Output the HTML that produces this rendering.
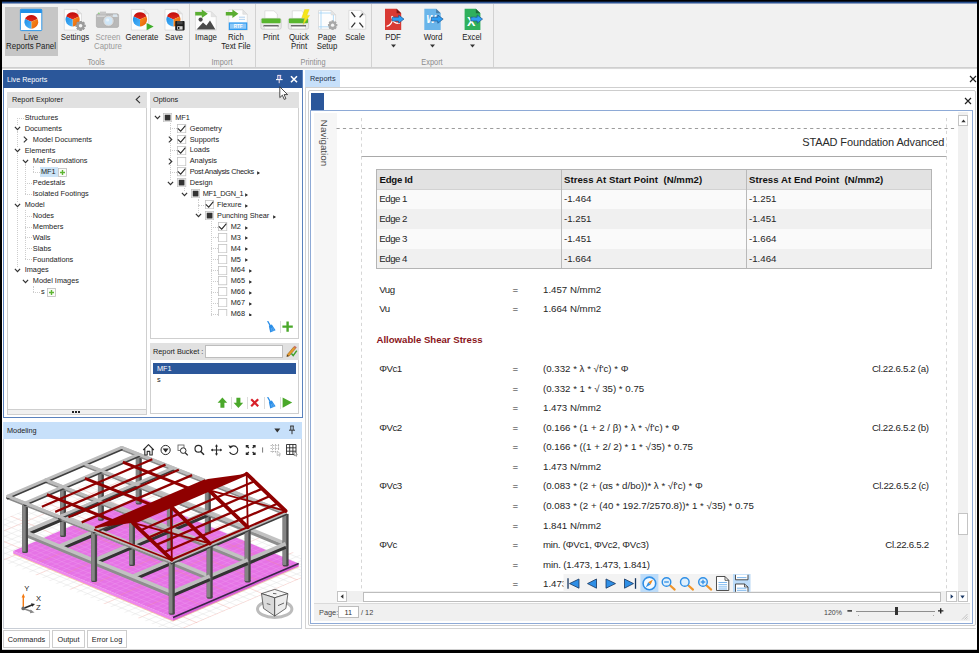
<!DOCTYPE html>
<html><head><meta charset="utf-8"><title>Live Reports</title>
<style>
html,body{margin:0;padding:0}
body{width:979px;height:653px;overflow:hidden;background:#000;position:relative;font-family:"Liberation Sans",sans-serif;}
#app div,#app span.t,#app svg{position:absolute;box-sizing:border-box}
#app{position:absolute;left:0;top:0;width:979px;height:653px;overflow:hidden}
span.t{white-space:pre;display:block}
</style></head><body><div id="app">
<div style="left:2px;top:1px;width:975px;height:649px;background:#ffffff;"></div>
<div style="left:2px;top:1px;width:975px;height:3px;background:#2a5292;"></div>
<div style="left:0px;top:0px;width:979px;height:1px;background:#000;"></div>
<div style="left:2px;top:1px;width:975px;height:1px;background:#0c1830;"></div>
<div style="left:2px;top:3px;width:975px;height:64px;background:#f1f1f1;"></div>
<div style="left:2px;top:3px;width:975px;height:1px;background:#8a9dc0;"></div>
<div style="left:2px;top:67px;width:975px;height:1px;background:#cfcfcf;"></div>
<div style="left:2px;top:68px;width:975px;height:1px;background:#dadada;"></div>
<div style="left:2px;top:69px;width:975px;height:1px;background:#fdfdfd;"></div>
<div style="left:5px;top:7px;width:53px;height:49px;background:#c6c6c6;"></div>
<div style="left:189px;top:4px;width:1px;height:63px;background:#d2d2d2;"></div>
<div style="left:255px;top:4px;width:1px;height:63px;background:#d2d2d2;"></div>
<div style="left:371px;top:4px;width:1px;height:63px;background:#d2d2d2;"></div>
<div style="left:493px;top:4px;width:1px;height:63px;background:#d2d2d2;"></div>
<span class="t" style="top:31px;line-height:12px;font-size:8.5px;color:#202020;left:-118.7px;width:300px;text-align:center;transform:scaleX(0.925);">Live</span>
<span class="t" style="top:40px;line-height:12px;font-size:8.5px;color:#202020;left:-118.7px;width:300px;text-align:center;transform:scaleX(0.925);">Reports Panel</span>
<span class="t" style="top:31px;line-height:12px;font-size:8.5px;color:#202020;left:-75.5px;width:300px;text-align:center;transform:scaleX(0.925);">Settings</span>
<span class="t" style="top:31px;line-height:12px;font-size:8.5px;color:#9a9a9a;left:-42.5px;width:300px;text-align:center;transform:scaleX(0.925);">Screen</span>
<span class="t" style="top:40px;line-height:12px;font-size:8.5px;color:#9a9a9a;left:-42.5px;width:300px;text-align:center;transform:scaleX(0.925);">Capture</span>
<span class="t" style="top:31px;line-height:12px;font-size:8.5px;color:#202020;left:-8px;width:300px;text-align:center;transform:scaleX(0.925);">Generate</span>
<span class="t" style="top:31px;line-height:12px;font-size:8.5px;color:#202020;left:23.5px;width:300px;text-align:center;transform:scaleX(0.925);">Save</span>
<span class="t" style="top:31px;line-height:12px;font-size:8.5px;color:#202020;left:55.5px;width:300px;text-align:center;transform:scaleX(0.925);">Image</span>
<span class="t" style="top:31px;line-height:12px;font-size:8.5px;color:#202020;left:85.5px;width:300px;text-align:center;transform:scaleX(0.925);">Rich</span>
<span class="t" style="top:40px;line-height:12px;font-size:8.5px;color:#202020;left:85.5px;width:300px;text-align:center;transform:scaleX(0.925);">Text File</span>
<span class="t" style="top:31px;line-height:12px;font-size:8.5px;color:#202020;left:121px;width:300px;text-align:center;transform:scaleX(0.925);">Print</span>
<span class="t" style="top:31px;line-height:12px;font-size:8.5px;color:#202020;left:148.5px;width:300px;text-align:center;transform:scaleX(0.925);">Quick</span>
<span class="t" style="top:40px;line-height:12px;font-size:8.5px;color:#202020;left:148.5px;width:300px;text-align:center;transform:scaleX(0.925);">Print</span>
<span class="t" style="top:31px;line-height:12px;font-size:8.5px;color:#202020;left:177px;width:300px;text-align:center;transform:scaleX(0.925);">Page</span>
<span class="t" style="top:40px;line-height:12px;font-size:8.5px;color:#202020;left:177px;width:300px;text-align:center;transform:scaleX(0.925);">Setup</span>
<span class="t" style="top:31px;line-height:12px;font-size:8.5px;color:#202020;left:205px;width:300px;text-align:center;transform:scaleX(0.925);">Scale</span>
<span class="t" style="top:31px;line-height:12px;font-size:8.5px;color:#202020;left:243px;width:300px;text-align:center;transform:scaleX(0.925);">PDF</span>
<span class="t" style="top:31px;line-height:12px;font-size:8.5px;color:#202020;left:282.5px;width:300px;text-align:center;transform:scaleX(0.925);">Word</span>
<span class="t" style="top:31px;line-height:12px;font-size:8.5px;color:#202020;left:322px;width:300px;text-align:center;transform:scaleX(0.925);">Excel</span>
<svg style="left:390.5px;top:44px;" width="5" height="4" viewBox="0 0 5 4"><path d="M0,0.5 L5,0.5 L2.5,3.5 Z" fill="#333"/></svg>
<svg style="left:430.0px;top:44px;" width="5" height="4" viewBox="0 0 5 4"><path d="M0,0.5 L5,0.5 L2.5,3.5 Z" fill="#333"/></svg>
<svg style="left:469.5px;top:44px;" width="5" height="4" viewBox="0 0 5 4"><path d="M0,0.5 L5,0.5 L2.5,3.5 Z" fill="#333"/></svg>
<span class="t" style="top:56px;line-height:12px;font-size:8.3px;color:#8c8c8c;left:-54px;width:300px;text-align:center;transform:scaleX(0.89);">Tools</span>
<span class="t" style="top:56px;line-height:12px;font-size:8.3px;color:#8c8c8c;left:72px;width:300px;text-align:center;transform:scaleX(0.89);">Import</span>
<span class="t" style="top:56px;line-height:12px;font-size:8.3px;color:#8c8c8c;left:163px;width:300px;text-align:center;transform:scaleX(0.89);">Printing</span>
<span class="t" style="top:56px;line-height:12px;font-size:8.3px;color:#8c8c8c;left:282px;width:300px;text-align:center;transform:scaleX(0.89);">Export</span>
<svg width="0" height="0" style="left:0;top:0"><defs><linearGradient id="gr" x1="0" y1="0" x2="0" y2="1"><stop offset="0" stop-color="#c00b0b"/><stop offset="1" stop-color="#e02a1a"/></linearGradient><linearGradient id="go" x1="0" y1="0" x2="1" y2="1"><stop offset="0" stop-color="#f8941e"/><stop offset="1" stop-color="#e85a08"/></linearGradient><linearGradient id="gb" x1="0" y1="0" x2="1" y2="1"><stop offset="0" stop-color="#1e8fe8"/><stop offset="1" stop-color="#4fb4f8"/></linearGradient></defs></svg>
<svg style="left:0px;top:0px;" width="500" height="34" viewBox="0 0 500 34"><rect x="20.4" y="9.3" width="21.4" height="21.3" rx="0.8" fill="#ffffff" stroke="#1e90e8" stroke-width="0.9"/><rect x="20.4" y="9.3" width="21.4" height="3.7" fill="#1e90e8"/><path d="M31.3,21.8 L25.05,18.88 A6.9,6.9 0 0 1 37.55,18.88 Z" fill="url(#gr)"/><path d="M31.3,21.8 L37.55,18.88 A6.9,6.9 0 0 1 31.30,28.70 Z" fill="url(#go)"/><path d="M31.3,21.8 L31.30,28.70 A6.9,6.9 0 0 1 25.05,18.88 Z" fill="url(#gb)"/><path d="M64.3,9.4 H77.0 L81.5,13.9 V30.1 H64.3 Z" fill="#fdfdfd" stroke="#d4d4d4" stroke-width="0.7"/><path d="M77.0,9.4 V13.9 H81.5 Z" fill="#e4e4e4" stroke="#d4d4d4" stroke-width="0.5"/><path d="M72.6,19.4 L66.17,16.40 A7.1,7.1 0 0 1 79.03,16.40 Z" fill="url(#gr)"/><path d="M72.6,19.4 L79.03,16.40 A7.1,7.1 0 0 1 72.60,26.50 Z" fill="url(#go)"/><path d="M72.6,19.4 L72.60,26.50 A7.1,7.1 0 0 1 66.17,16.40 Z" fill="url(#gb)"/><rect x="79.42" y="20.90" width="2.35" height="9.80" rx="0.5" fill="#9b9b9b" transform="rotate(0 80.6 25.8)"/><rect x="79.42" y="20.90" width="2.35" height="9.80" rx="0.5" fill="#9b9b9b" transform="rotate(45 80.6 25.8)"/><rect x="79.42" y="20.90" width="2.35" height="9.80" rx="0.5" fill="#9b9b9b" transform="rotate(90 80.6 25.8)"/><rect x="79.42" y="20.90" width="2.35" height="9.80" rx="0.5" fill="#9b9b9b" transform="rotate(135 80.6 25.8)"/><rect x="79.42" y="20.90" width="2.35" height="9.80" rx="0.5" fill="#9b9b9b" transform="rotate(180 80.6 25.8)"/><rect x="79.42" y="20.90" width="2.35" height="9.80" rx="0.5" fill="#9b9b9b" transform="rotate(225 80.6 25.8)"/><rect x="79.42" y="20.90" width="2.35" height="9.80" rx="0.5" fill="#9b9b9b" transform="rotate(270 80.6 25.8)"/><rect x="79.42" y="20.90" width="2.35" height="9.80" rx="0.5" fill="#9b9b9b" transform="rotate(315 80.6 25.8)"/><circle cx="80.6" cy="25.8" r="3.72" fill="#9b9b9b"/><circle cx="80.6" cy="25.8" r="1.76" fill="#f4f4f4"/><rect x="96.4" y="13.8" width="22.2" height="13.6" rx="1.6" fill="#b9b9b9" stroke="#a4a4a4" stroke-width="0.6"/><rect x="100" y="11.6" width="6" height="3" fill="#c6c6c6"/><rect x="96.8" y="15.4" width="21.4" height="1.6" fill="#d5d5d5"/><rect x="113" y="14.4" width="4" height="2.4" fill="#d9e6f0"/><rect x="98" y="12.6" width="1.6" height="1.4" fill="#8fd080"/><circle cx="108.5" cy="20.9" r="5.6" fill="#d9d9d9" stroke="#a9a9a9" stroke-width="0.6"/><circle cx="108.5" cy="20.9" r="3.9" fill="#cfe6f7"/><circle cx="107.6" cy="20" r="1.6" fill="#e9f4fc"/><path d="M131.4,9.4 H144.1 L148.6,13.9 V30.1 H131.4 Z" fill="#fdfdfd" stroke="#d4d4d4" stroke-width="0.7"/><path d="M144.1,9.4 V13.9 H148.6 Z" fill="#e4e4e4" stroke="#d4d4d4" stroke-width="0.5"/><path d="M140,19.4 L133.57,16.40 A7.1,7.1 0 0 1 146.43,16.40 Z" fill="url(#gr)"/><path d="M140,19.4 L146.43,16.40 A7.1,7.1 0 0 1 140.00,26.50 Z" fill="url(#go)"/><path d="M140,19.4 L140.00,26.50 A7.1,7.1 0 0 1 133.57,16.40 Z" fill="url(#gb)"/><path d="M146.6,23 L153.6,26.6 L146.6,30.2 Z" fill="#3fae2a"/><path d="M165,9.4 H177.7 L182.2,13.9 V30.1 H165 Z" fill="#fdfdfd" stroke="#d4d4d4" stroke-width="0.7"/><path d="M177.7,9.4 V13.9 H182.2 Z" fill="#e4e4e4" stroke="#d4d4d4" stroke-width="0.5"/><path d="M173.4,19.4 L166.97,16.40 A7.1,7.1 0 0 1 179.83,16.40 Z" fill="url(#gr)"/><path d="M173.4,19.4 L179.83,16.40 A7.1,7.1 0 0 1 173.40,26.50 Z" fill="url(#go)"/><path d="M173.4,19.4 L173.40,26.50 A7.1,7.1 0 0 1 166.97,16.40 Z" fill="url(#gb)"/><rect x="175.2" y="21" width="9.4" height="9.4" rx="0.8" fill="#1c1c1c"/><rect x="177" y="21" width="5.6" height="3.4" fill="#444"/><rect x="177.2" y="26.2" width="5.4" height="3.4" fill="#d8d8d8"/><rect x="178" y="27" width="1.4" height="2" fill="#1c1c1c"/><path d="M195.4,11.7 H211.20000000000002 L216.20000000000002,16.7 V30.2 H195.4 Z" fill="#fdfdfd" stroke="#d4d4d4" stroke-width="0.7"/><path d="M211.20000000000002,11.7 V16.7 H216.20000000000002 Z" fill="#e4e4e4" stroke="#d4d4d4" stroke-width="0.5"/><path d="M196.6,29.4 L203,22.4 L206.4,25.6 L210,20.6 L215.4,29.4 Z" fill="#4a4a4a"/><circle cx="200.6" cy="19.6" r="2.1" fill="#4a4a4a"/><path d="M195.2,12.0 H201.79999999999998 V9.4 L207.79999999999998,13.7 L201.79999999999998,18.0 V15.4 H195.2 Z" fill="#5aae32"/><path d="M228.8,9.8 H242.8 L247.3,14.3 V30.2 H228.8 Z" fill="#fdfdfd" stroke="#d4d4d4" stroke-width="0.7"/><path d="M242.8,9.8 V14.3 H247.3 Z" fill="#e4e4e4" stroke="#d4d4d4" stroke-width="0.5"/><path d="M239,17.2 H245 M239,19.4 H245" stroke="#9fc8ee" stroke-width="0.8"/><rect x="228.8" y="22.4" width="18.5" height="7.6" fill="#2f9bf0"/><rect x="230" y="23.6" width="16.1" height="5.2" fill="#8cc8f8"/><text x="238.1" y="28" font-size="4.6" font-weight="bold" font-family="Liberation Sans, sans-serif" text-anchor="middle" fill="#ffffff">RTF</text><path d="M225.8,12.0 H232.4 V9.4 L238.4,13.7 L232.4,18.0 V15.4 H225.8 Z" fill="#5aae32"/><path d="M264.9,18.8 V10.8 H273.9 L277.29999999999995,14 V18.8 Z" fill="#fff" stroke="#cfcfcf" stroke-width="0.6"/><rect x="260.9" y="18.4" width="20.3" height="10.8" rx="1.8" fill="#e9e9e9" stroke="#bdbdbd" stroke-width="0.6"/><rect x="261.5" y="18.6" width="19.1" height="4.6" rx="1" fill="#58b62e"/><rect x="263.5" y="25.2" width="15.1" height="1.5" fill="#4a4a4a"/><rect x="264.29999999999995" y="26.7" width="13.5" height="2.2" fill="#fafafa" stroke="#cfcfcf" stroke-width="0.4"/><path d="M292.3,18.8 V10.8 H301.3 L304.7,14 V18.8 Z" fill="#fff" stroke="#cfcfcf" stroke-width="0.6"/><rect x="288.3" y="18.4" width="20.3" height="10.8" rx="1.8" fill="#e9e9e9" stroke="#bdbdbd" stroke-width="0.6"/><rect x="288.90000000000003" y="18.6" width="19.1" height="4.6" rx="1" fill="#58b62e"/><rect x="290.90000000000003" y="25.2" width="15.1" height="1.5" fill="#4a4a4a"/><rect x="291.7" y="26.7" width="13.5" height="2.2" fill="#fafafa" stroke="#cfcfcf" stroke-width="0.4"/><path d="M304.6,9.6 H309.2 L306.8,15.4 H309.6 L303.2,24.6 L304.6,17.8 H301.8 Z" fill="#f6e61a" stroke="#e4cf10" stroke-width="0.4"/><path d="M318.5,10.4 H331.1 L335.6,14.9 V29.200000000000003 H318.5 Z" fill="#fdfdfd" stroke="#d4d4d4" stroke-width="0.7"/><path d="M331.1,10.4 V14.9 H335.6 Z" fill="#e4e4e4" stroke="#d4d4d4" stroke-width="0.5"/><path d="M321,10.6 V29 M318.7,13 H331 M318.7,26.8 H335.4 M333.4,15 V24" stroke="#9fd2f6" stroke-width="0.8" fill="none"/><rect x="331.50" y="20.60" width="2.21" height="9.20" rx="0.5" fill="#a8a8a8" transform="rotate(0 332.6 25.2)"/><rect x="331.50" y="20.60" width="2.21" height="9.20" rx="0.5" fill="#a8a8a8" transform="rotate(45 332.6 25.2)"/><rect x="331.50" y="20.60" width="2.21" height="9.20" rx="0.5" fill="#a8a8a8" transform="rotate(90 332.6 25.2)"/><rect x="331.50" y="20.60" width="2.21" height="9.20" rx="0.5" fill="#a8a8a8" transform="rotate(135 332.6 25.2)"/><rect x="331.50" y="20.60" width="2.21" height="9.20" rx="0.5" fill="#a8a8a8" transform="rotate(180 332.6 25.2)"/><rect x="331.50" y="20.60" width="2.21" height="9.20" rx="0.5" fill="#a8a8a8" transform="rotate(225 332.6 25.2)"/><rect x="331.50" y="20.60" width="2.21" height="9.20" rx="0.5" fill="#a8a8a8" transform="rotate(270 332.6 25.2)"/><rect x="331.50" y="20.60" width="2.21" height="9.20" rx="0.5" fill="#a8a8a8" transform="rotate(315 332.6 25.2)"/><circle cx="332.6" cy="25.2" r="3.50" fill="#a8a8a8"/><circle cx="332.6" cy="25.2" r="1.66" fill="#f4f4f4"/><path d="M348.8,10.4 H361.2 L365.7,14.9 V29.200000000000003 H348.8 Z" fill="#fdfdfd" stroke="#d4d4d4" stroke-width="0.7"/><path d="M361.2,10.4 V14.9 H365.7 Z" fill="#e4e4e4" stroke="#d4d4d4" stroke-width="0.5"/><path d="M351.4,12.2 L355.2,17 M363,13.6 L359.6,17.4 M351.4,27.4 L355.2,22.6 M363.2,27.4 L359.4,22.6" stroke="#333" stroke-width="1.3" fill="none"/><path d="M385,8.7 H396.59999999999997 L401.2,13.3 V30.1 H385 Z" fill="#d93a34"/><path d="M396.59999999999997,8.7 V13.3 H401.2 Z" fill="#7e1a16"/><path d="M386.6,26.4 C390,25.6 392.4,22.6 393,17.6 C392.6,15.8 391.6,15.8 391.8,17.6 C392.6,21.6 396,23.6 399.6,23.4" fill="none" stroke="#fff" stroke-width="1.2"/><path d="M392.2,17.2 H398.59999999999997 V15 L404.0,19.1 L398.59999999999997,23.2 V21 H392.2 Z" fill="#2f9df2" stroke="#17497e" stroke-width="0.6" stroke-linejoin="round"/><path d="M424.3,8.7 H436.09999999999997 L440.7,13.3 V30.1 H424.3 Z" fill="#6ab5ea"/><path d="M436.09999999999997,8.7 V13.3 H440.7 Z" fill="#4a7fa8"/><text x="431" y="23.4" font-size="10" font-weight="bold" font-style="italic" font-family="Liberation Sans, sans-serif" text-anchor="middle" fill="#ffffff">W</text><path d="M431.4,17.2 H437.79999999999995 V15 L443.2,19.1 L437.79999999999995,23.2 V21 H431.4 Z" fill="#2f9df2" stroke="#17497e" stroke-width="0.6" stroke-linejoin="round"/><path d="M464.6,8.7 H475.8 L480.40000000000003,13.3 V30.1 H464.6 Z" fill="#2fb05c"/><path d="M475.8,8.7 V13.3 H480.40000000000003 Z" fill="#1c6e38"/><text x="471.2" y="26.4" font-size="12.5" font-weight="bold" font-family="Liberation Sans, sans-serif" text-anchor="middle" fill="#ffffff">X</text><path d="M470.8,17.2 H477.2 V15 L482.6,19.1 L477.2,23.2 V21 H470.8 Z" fill="#2f9df2" stroke="#17497e" stroke-width="0.6" stroke-linejoin="round"/></svg>
<div style="left:3px;top:70px;width:300px;height:348px;background:#ffffff;border:1px solid #5b82bd;"></div>
<div style="left:3px;top:70px;width:299px;height:18px;background:#2b579a;"></div>
<span class="t" style="top:74px;line-height:12px;font-size:7.2px;color:#ffffff;left:7px;">Live Reports</span>
<svg style="left:275px;top:74px;" width="9" height="10" viewBox="0 0 9 10"><path d="M2.4,1.4 H6.2 M2.8,1.4 V5.2 M5.6,1.4 V5.2" stroke="#f6e8f2" stroke-width="1" fill="none"/><path d="M4.9,1.6 V5" stroke="#c9a0d8" stroke-width="0.9"/><path d="M1,5.6 H7.6" stroke="#fff" stroke-width="1.1"/><path d="M4.2,6 V9.2" stroke="#f3dfe8" stroke-width="1"/></svg>
<svg style="left:289.5px;top:74.8px;" width="8.4" height="8.4" viewBox="0 0 8.4 8.4"><path d="M1,1.2 L7,7.2 M7,1.2 L1,7.2" stroke="#fff" stroke-width="1.6"/></svg>
<div style="left:7px;top:92px;width:140px;height:323px;background:#ffffff;border:1px solid #cfcfcf;"></div>
<div style="left:7px;top:92px;width:140px;height:16px;background:#e1e1e1;"></div>
<span class="t" style="top:94px;line-height:12px;font-size:7.3px;color:#222;left:12px;">Report Explorer</span>
<svg style="left:135px;top:95px;" width="6" height="9" viewBox="0 0 6 9"><path d="M5,0.8 L1.2,4.5 L5,8.2" fill="none" stroke="#333" stroke-width="1.1"/></svg>
<div style="left:7px;top:409px;width:140px;height:6px;background:#f0f0f0;border:1px solid #cfcfcf;"></div>
<div style="left:72.0px;top:411.3px;width:1.6px;height:1.6px;background:#222;"></div>
<div style="left:75.2px;top:411.3px;width:1.6px;height:1.6px;background:#222;"></div>
<div style="left:78.4px;top:411.3px;width:1.6px;height:1.6px;background:#222;"></div>
<div style="left:150px;top:92px;width:149px;height:247px;background:#ffffff;border:1px solid #cfcfcf;"></div>
<div style="left:150px;top:92px;width:149px;height:16px;background:#e1e1e1;"></div>
<span class="t" style="top:94px;line-height:12px;font-size:7.3px;color:#222;left:153px;">Options</span>
<div style="left:150px;top:343px;width:149px;height:71px;background:#ffffff;border:1px solid #cfcfcf;"></div>
<div style="left:150px;top:413px;width:149px;height:1px;background:#cfcfcf;"></div>
<div style="left:150px;top:343px;width:149px;height:17px;background:#e1e1e1;"></div>
<span class="t" style="top:346px;line-height:12px;font-size:7.3px;color:#222;left:153px;">Report Bucket :</span>
<div style="left:205px;top:345px;width:78px;height:13px;background:#ffffff;border:1px solid #bdbdbd;"></div>
<div style="left:153px;top:363px;width:143px;height:10.5px;background:#2b579a;"></div>
<span class="t" style="top:363px;line-height:12px;font-size:7.3px;color:#fff;left:157px;">MF1</span>
<span class="t" style="top:374px;line-height:12px;font-size:7.3px;color:#222;left:157px;">s</span>
<div style="left:17px;top:117.5px;width:1px;height:7.900000000000006px;border-left:1px dotted #cdcdcd;"></div>
<div style="left:17px;top:117.5px;width:7px;height:1px;border-top:1px dotted #cdcdcd;"></div>
<div style="left:17px;top:131.4px;width:1px;height:15.799999999999983px;border-left:1px dotted #cdcdcd;"></div>
<div style="left:17px;top:153.2px;width:1px;height:48.5px;border-left:1px dotted #cdcdcd;"></div>
<div style="left:17px;top:207.7px;width:1px;height:59.400000000000034px;border-left:1px dotted #cdcdcd;"></div>
<div style="left:25px;top:164.1px;width:1px;height:29.700000000000017px;border-left:1px dotted #cdcdcd;"></div>
<div style="left:25px;top:182.9px;width:7px;height:1px;border-top:1px dotted #cdcdcd;"></div>
<div style="left:25px;top:193.8px;width:7px;height:1px;border-top:1px dotted #cdcdcd;"></div>
<div style="left:33px;top:166.1px;width:1px;height:5.900000000000006px;border-left:1px dotted #cdcdcd;"></div>
<div style="left:33px;top:172.0px;width:7px;height:1px;border-top:1px dotted #cdcdcd;"></div>
<div style="left:25px;top:209.7px;width:1px;height:49.50000000000006px;border-left:1px dotted #cdcdcd;"></div>
<div style="left:25px;top:215.60000000000002px;width:7px;height:1px;border-top:1px dotted #cdcdcd;"></div>
<div style="left:25px;top:226.5px;width:7px;height:1px;border-top:1px dotted #cdcdcd;"></div>
<div style="left:25px;top:237.4px;width:7px;height:1px;border-top:1px dotted #cdcdcd;"></div>
<div style="left:25px;top:248.3px;width:7px;height:1px;border-top:1px dotted #cdcdcd;"></div>
<div style="left:25px;top:259.20000000000005px;width:7px;height:1px;border-top:1px dotted #cdcdcd;"></div>
<div style="left:33px;top:286.0px;width:1px;height:5.899999999999977px;border-left:1px dotted #cdcdcd;"></div>
<div style="left:33px;top:291.9px;width:7px;height:1px;border-top:1px dotted #cdcdcd;"></div>
<span class="t" style="top:112px;line-height:12px;font-size:7.35px;color:#1c1c1c;left:24.7px;">Structures</span>
<span class="t" style="top:123px;line-height:12px;font-size:7.35px;color:#1c1c1c;left:24.7px;">Documents</span>
<svg style="left:13.7px;top:126.20000000000002px;" width="7" height="5" viewBox="0 0 7 5"><path d="M0.9,0.9 L3.5,3.7 L6.1,0.9" fill="none" stroke="#333" stroke-width="1.2"/></svg>
<span class="t" style="top:134px;line-height:12px;font-size:7.35px;color:#1c1c1c;left:32.8px;">Model Documents</span>
<svg style="left:23.299999999999997px;top:136.10000000000002px;" width="5" height="7" viewBox="0 0 5 7"><path d="M0.8,0.7 L3.8,3.5 L0.8,6.3" fill="none" stroke="#333" stroke-width="1.1"/></svg>
<span class="t" style="top:145px;line-height:12px;font-size:7.35px;color:#1c1c1c;left:24.7px;">Elements</span>
<svg style="left:13.7px;top:148.0px;" width="7" height="5" viewBox="0 0 7 5"><path d="M0.9,0.9 L3.5,3.7 L6.1,0.9" fill="none" stroke="#333" stroke-width="1.2"/></svg>
<span class="t" style="top:155px;line-height:12px;font-size:7.35px;color:#1c1c1c;left:32.8px;">Mat Foundations</span>
<svg style="left:21.799999999999997px;top:158.9px;" width="7" height="5" viewBox="0 0 7 5"><path d="M0.9,0.9 L3.5,3.7 L6.1,0.9" fill="none" stroke="#333" stroke-width="1.2"/></svg>
<div style="left:40.4px;top:167.0px;width:17.6px;height:9.6px;background:#cce4f7;"></div>
<span class="t" style="top:166px;line-height:12px;font-size:7.35px;color:#1c1c1c;left:40.9px;">MF1</span>
<span class="t" style="top:177px;line-height:12px;font-size:7.35px;color:#1c1c1c;left:32.8px;">Pedestals</span>
<span class="t" style="top:188px;line-height:12px;font-size:7.35px;color:#1c1c1c;left:32.8px;">Isolated Footings</span>
<span class="t" style="top:199px;line-height:12px;font-size:7.35px;color:#1c1c1c;left:24.7px;">Model</span>
<svg style="left:13.7px;top:202.5px;" width="7" height="5" viewBox="0 0 7 5"><path d="M0.9,0.9 L3.5,3.7 L6.1,0.9" fill="none" stroke="#333" stroke-width="1.2"/></svg>
<span class="t" style="top:210px;line-height:12px;font-size:7.35px;color:#1c1c1c;left:32.8px;">Nodes</span>
<span class="t" style="top:221px;line-height:12px;font-size:7.35px;color:#1c1c1c;left:32.8px;">Members</span>
<span class="t" style="top:232px;line-height:12px;font-size:7.35px;color:#1c1c1c;left:32.8px;">Walls</span>
<span class="t" style="top:243px;line-height:12px;font-size:7.35px;color:#1c1c1c;left:32.8px;">Slabs</span>
<span class="t" style="top:254px;line-height:12px;font-size:7.35px;color:#1c1c1c;left:32.8px;">Foundations</span>
<span class="t" style="top:264px;line-height:12px;font-size:7.35px;color:#1c1c1c;left:24.7px;">Images</span>
<svg style="left:13.7px;top:267.90000000000003px;" width="7" height="5" viewBox="0 0 7 5"><path d="M0.9,0.9 L3.5,3.7 L6.1,0.9" fill="none" stroke="#333" stroke-width="1.2"/></svg>
<span class="t" style="top:275px;line-height:12px;font-size:7.35px;color:#1c1c1c;left:32.8px;">Model Images</span>
<svg style="left:21.799999999999997px;top:278.8px;" width="7" height="5" viewBox="0 0 7 5"><path d="M0.9,0.9 L3.5,3.7 L6.1,0.9" fill="none" stroke="#333" stroke-width="1.2"/></svg>
<span class="t" style="top:286px;line-height:12px;font-size:7.35px;color:#1c1c1c;left:40.9px;">s</span>
<svg style="left:58.2px;top:168.0px;" width="9" height="9" viewBox="0 0 9 9"><rect x="0.5" y="0.5" width="8" height="8" fill="#fbfdf8" stroke="#bcbcbc" stroke-width="0.8"/><path d="M4.5,2V7M2,4.5H7" stroke="#5cb531" stroke-width="1.4"/></svg>
<svg style="left:47.3px;top:287.9px;" width="9" height="9" viewBox="0 0 9 9"><rect x="0.5" y="0.5" width="8" height="8" fill="#fbfdf8" stroke="#bcbcbc" stroke-width="0.8"/><path d="M4.5,2V7M2,4.5H7" stroke="#5cb531" stroke-width="1.4"/></svg>
<div style="left:170px;top:122.5px;width:1px;height:57.400000000000006px;border-left:1px dotted #cdcdcd;"></div>
<div style="left:170px;top:128.4px;width:7px;height:1px;border-top:1px dotted #cdcdcd;"></div>
<div style="left:170px;top:150.2px;width:7px;height:1px;border-top:1px dotted #cdcdcd;"></div>
<div style="left:170px;top:172.0px;width:7px;height:1px;border-top:1px dotted #cdcdcd;"></div>
<div style="left:184px;top:187.9px;width:1px;height:2.9000000000000057px;border-left:1px dotted #cdcdcd;"></div>
<div style="left:198px;top:198.8px;width:1px;height:13.800000000000011px;border-left:1px dotted #cdcdcd;"></div>
<div style="left:198px;top:204.7px;width:6px;height:1px;border-top:1px dotted #cdcdcd;"></div>
<div style="left:211px;top:220.60000000000002px;width:1px;height:95.10000000000002px;border-left:1px dotted #cdcdcd;"></div>
<div style="left:211px;top:226.5px;width:7px;height:1px;border-top:1px dotted #cdcdcd;"></div>
<div style="left:211px;top:237.4px;width:7px;height:1px;border-top:1px dotted #cdcdcd;"></div>
<div style="left:211px;top:248.3px;width:7px;height:1px;border-top:1px dotted #cdcdcd;"></div>
<div style="left:211px;top:259.20000000000005px;width:7px;height:1px;border-top:1px dotted #cdcdcd;"></div>
<div style="left:211px;top:270.1px;width:7px;height:1px;border-top:1px dotted #cdcdcd;"></div>
<div style="left:211px;top:281.0px;width:7px;height:1px;border-top:1px dotted #cdcdcd;"></div>
<div style="left:211px;top:291.9px;width:7px;height:1px;border-top:1px dotted #cdcdcd;"></div>
<div style="left:211px;top:302.8px;width:7px;height:1px;border-top:1px dotted #cdcdcd;"></div>
<div style="left:211px;top:313.70000000000005px;width:7px;height:1px;border-top:1px dotted #cdcdcd;"></div>
<div style="left:151px;top:108px;width:147px;height:208px;overflow:hidden">
<svg style="left:2.5px;top:7.300000000000001px;" width="7" height="5" viewBox="0 0 7 5"><path d="M0.9,0.9 L3.5,3.7 L6.1,0.9" fill="none" stroke="#333" stroke-width="1.2"/></svg>
<svg style="left:11.9px;top:4.9px;" width="9.2" height="9.2" viewBox="0 0 9.2 9.2"><rect x="0.4" y="0.4" width="8.4" height="8.4" fill="#fff" stroke="#c2c2c2" stroke-width="0.8"/><rect x="1.7" y="1.7" width="5.8" height="5.8" fill="#333"/></svg>
<span class="t" style="top:4px;line-height:12px;font-size:7.35px;color:#1c1c1c;left:24.2px;">MF1</span>
<svg style="left:26.4px;top:15.800000000000006px;" width="9.2" height="9.2" viewBox="0 0 9.2 9.2"><rect x="0.4" y="0.4" width="8.4" height="8.4" fill="#fff" stroke="#c2c2c2" stroke-width="0.8"/><path d="M0.8,4.4 L3.7,7.2 L8.4,1.6" fill="none" stroke="#2a2a2a" stroke-width="1.05"/></svg>
<span class="t" style="top:15px;line-height:12px;font-size:7.35px;color:#1c1c1c;left:38.7px;">Geometry</span>
<svg style="left:16.5px;top:28.100000000000012px;" width="5" height="7" viewBox="0 0 5 7"><path d="M0.8,0.7 L3.8,3.5 L0.8,6.3" fill="none" stroke="#333" stroke-width="1.1"/></svg>
<svg style="left:26.4px;top:26.70000000000001px;" width="9.2" height="9.2" viewBox="0 0 9.2 9.2"><rect x="0.4" y="0.4" width="8.4" height="8.4" fill="#fff" stroke="#c2c2c2" stroke-width="0.8"/><path d="M0.8,4.4 L3.7,7.2 L8.4,1.6" fill="none" stroke="#2a2a2a" stroke-width="1.05"/></svg>
<span class="t" style="top:26px;line-height:12px;font-size:7.35px;color:#1c1c1c;left:38.7px;">Supports</span>
<svg style="left:26.4px;top:37.59999999999999px;" width="9.2" height="9.2" viewBox="0 0 9.2 9.2"><rect x="0.4" y="0.4" width="8.4" height="8.4" fill="#fff" stroke="#c2c2c2" stroke-width="0.8"/><path d="M0.8,4.4 L3.7,7.2 L8.4,1.6" fill="none" stroke="#2a2a2a" stroke-width="1.05"/></svg>
<span class="t" style="top:36px;line-height:12px;font-size:7.35px;color:#1c1c1c;left:38.7px;">Loads</span>
<svg style="left:16.5px;top:49.89999999999999px;" width="5" height="7" viewBox="0 0 5 7"><path d="M0.8,0.7 L3.8,3.5 L0.8,6.3" fill="none" stroke="#333" stroke-width="1.1"/></svg>
<svg style="left:26.4px;top:48.49999999999999px;" width="9.2" height="9.2" viewBox="0 0 9.2 9.2"><rect x="0.4" y="0.4" width="8.4" height="8.4" fill="#fff" stroke="#c2c2c2" stroke-width="0.8"/></svg>
<span class="t" style="top:47px;line-height:12px;font-size:7.35px;color:#1c1c1c;left:38.7px;">Analysis</span>
<svg style="left:26.4px;top:59.4px;" width="9.2" height="9.2" viewBox="0 0 9.2 9.2"><rect x="0.4" y="0.4" width="8.4" height="8.4" fill="#fff" stroke="#c2c2c2" stroke-width="0.8"/><path d="M0.8,4.4 L3.7,7.2 L8.4,1.6" fill="none" stroke="#2a2a2a" stroke-width="1.05"/></svg>
<span class="t" style="top:58px;line-height:12px;font-size:7.35px;color:#1c1c1c;left:38.7px;letter-spacing:-0.3px;">Post Analysis Checks</span>
<svg style="left:105.8px;top:63.0px;" width="3.2" height="4" viewBox="0 0 3.2 4"><path d="M0.2,0.2 L3,2 L0.2,3.8 Z" fill="#222"/></svg>
<svg style="left:15.5px;top:72.7px;" width="7" height="5" viewBox="0 0 7 5"><path d="M0.9,0.9 L3.5,3.7 L6.1,0.9" fill="none" stroke="#333" stroke-width="1.2"/></svg>
<svg style="left:26.4px;top:70.30000000000001px;" width="9.2" height="9.2" viewBox="0 0 9.2 9.2"><rect x="0.4" y="0.4" width="8.4" height="8.4" fill="#fff" stroke="#c2c2c2" stroke-width="0.8"/><rect x="1.7" y="1.7" width="5.8" height="5.8" fill="#333"/></svg>
<span class="t" style="top:69px;line-height:12px;font-size:7.35px;color:#1c1c1c;left:38.7px;">Design</span>
<svg style="left:29.5px;top:83.60000000000001px;" width="7" height="5" viewBox="0 0 7 5"><path d="M0.9,0.9 L3.5,3.7 L6.1,0.9" fill="none" stroke="#333" stroke-width="1.2"/></svg>
<svg style="left:40.09999999999999px;top:81.20000000000002px;" width="9.2" height="9.2" viewBox="0 0 9.2 9.2"><rect x="0.4" y="0.4" width="8.4" height="8.4" fill="#fff" stroke="#c2c2c2" stroke-width="0.8"/><rect x="1.7" y="1.7" width="5.8" height="5.8" fill="#333"/></svg>
<span class="t" style="top:80px;line-height:12px;font-size:7.35px;color:#1c1c1c;left:51.79999999999999px;letter-spacing:-0.3px;">MF1_DGN_1</span>
<svg style="left:93.99999999999999px;top:84.80000000000001px;" width="3.2" height="4" viewBox="0 0 3.2 4"><path d="M0.2,0.2 L3,2 L0.2,3.8 Z" fill="#222"/></svg>
<svg style="left:53.70000000000001px;top:92.1px;" width="9.2" height="9.2" viewBox="0 0 9.2 9.2"><rect x="0.4" y="0.4" width="8.4" height="8.4" fill="#fff" stroke="#c2c2c2" stroke-width="0.8"/><path d="M0.8,4.4 L3.7,7.2 L8.4,1.6" fill="none" stroke="#2a2a2a" stroke-width="1.05"/></svg>
<span class="t" style="top:91px;line-height:12px;font-size:7.35px;color:#1c1c1c;left:66.00000000000001px;">Flexure</span>
<svg style="left:93.60000000000001px;top:95.69999999999999px;" width="3.2" height="4" viewBox="0 0 3.2 4"><path d="M0.2,0.2 L3,2 L0.2,3.8 Z" fill="#222"/></svg>
<svg style="left:43.5px;top:105.40000000000002px;" width="7" height="5" viewBox="0 0 7 5"><path d="M0.9,0.9 L3.5,3.7 L6.1,0.9" fill="none" stroke="#333" stroke-width="1.2"/></svg>
<svg style="left:53.70000000000001px;top:103.00000000000003px;" width="9.2" height="9.2" viewBox="0 0 9.2 9.2"><rect x="0.4" y="0.4" width="8.4" height="8.4" fill="#fff" stroke="#c2c2c2" stroke-width="0.8"/><rect x="1.7" y="1.7" width="5.8" height="5.8" fill="#333"/></svg>
<span class="t" style="top:102px;line-height:12px;font-size:7.35px;color:#1c1c1c;left:66.00000000000001px;">Punching Shear</span>
<svg style="left:121.60000000000001px;top:106.60000000000002px;" width="3.2" height="4" viewBox="0 0 3.2 4"><path d="M0.2,0.2 L3,2 L0.2,3.8 Z" fill="#222"/></svg>
<svg style="left:67.4px;top:113.9px;" width="9.2" height="9.2" viewBox="0 0 9.2 9.2"><rect x="0.4" y="0.4" width="8.4" height="8.4" fill="#fff" stroke="#c2c2c2" stroke-width="0.8"/><path d="M0.8,4.4 L3.7,7.2 L8.4,1.6" fill="none" stroke="#2a2a2a" stroke-width="1.05"/></svg>
<span class="t" style="top:113px;line-height:12px;font-size:7.35px;color:#1c1c1c;left:79.7px;">M2</span>
<svg style="left:94.3px;top:117.5px;" width="3.2" height="4" viewBox="0 0 3.2 4"><path d="M0.2,0.2 L3,2 L0.2,3.8 Z" fill="#222"/></svg>
<svg style="left:67.4px;top:124.80000000000001px;" width="9.2" height="9.2" viewBox="0 0 9.2 9.2"><rect x="0.4" y="0.4" width="8.4" height="8.4" fill="#fff" stroke="#c2c2c2" stroke-width="0.8"/></svg>
<span class="t" style="top:124px;line-height:12px;font-size:7.35px;color:#1c1c1c;left:79.7px;">M3</span>
<svg style="left:94.3px;top:128.4px;" width="3.2" height="4" viewBox="0 0 3.2 4"><path d="M0.2,0.2 L3,2 L0.2,3.8 Z" fill="#222"/></svg>
<svg style="left:67.4px;top:135.70000000000002px;" width="9.2" height="9.2" viewBox="0 0 9.2 9.2"><rect x="0.4" y="0.4" width="8.4" height="8.4" fill="#fff" stroke="#c2c2c2" stroke-width="0.8"/></svg>
<span class="t" style="top:135px;line-height:12px;font-size:7.35px;color:#1c1c1c;left:79.7px;">M4</span>
<svg style="left:94.3px;top:139.3px;" width="3.2" height="4" viewBox="0 0 3.2 4"><path d="M0.2,0.2 L3,2 L0.2,3.8 Z" fill="#222"/></svg>
<svg style="left:67.4px;top:146.60000000000005px;" width="9.2" height="9.2" viewBox="0 0 9.2 9.2"><rect x="0.4" y="0.4" width="8.4" height="8.4" fill="#fff" stroke="#c2c2c2" stroke-width="0.8"/></svg>
<span class="t" style="top:146px;line-height:12px;font-size:7.35px;color:#1c1c1c;left:79.7px;">M5</span>
<svg style="left:94.3px;top:150.20000000000005px;" width="3.2" height="4" viewBox="0 0 3.2 4"><path d="M0.2,0.2 L3,2 L0.2,3.8 Z" fill="#222"/></svg>
<svg style="left:67.4px;top:157.50000000000003px;" width="9.2" height="9.2" viewBox="0 0 9.2 9.2"><rect x="0.4" y="0.4" width="8.4" height="8.4" fill="#fff" stroke="#c2c2c2" stroke-width="0.8"/></svg>
<span class="t" style="top:156px;line-height:12px;font-size:7.35px;color:#1c1c1c;left:79.7px;">M64</span>
<svg style="left:98.3px;top:161.10000000000002px;" width="3.2" height="4" viewBox="0 0 3.2 4"><path d="M0.2,0.2 L3,2 L0.2,3.8 Z" fill="#222"/></svg>
<svg style="left:67.4px;top:168.4px;" width="9.2" height="9.2" viewBox="0 0 9.2 9.2"><rect x="0.4" y="0.4" width="8.4" height="8.4" fill="#fff" stroke="#c2c2c2" stroke-width="0.8"/></svg>
<span class="t" style="top:167px;line-height:12px;font-size:7.35px;color:#1c1c1c;left:79.7px;">M65</span>
<svg style="left:98.3px;top:172.0px;" width="3.2" height="4" viewBox="0 0 3.2 4"><path d="M0.2,0.2 L3,2 L0.2,3.8 Z" fill="#222"/></svg>
<svg style="left:67.4px;top:179.29999999999998px;" width="9.2" height="9.2" viewBox="0 0 9.2 9.2"><rect x="0.4" y="0.4" width="8.4" height="8.4" fill="#fff" stroke="#c2c2c2" stroke-width="0.8"/></svg>
<span class="t" style="top:178px;line-height:12px;font-size:7.35px;color:#1c1c1c;left:79.7px;">M66</span>
<svg style="left:98.3px;top:182.89999999999998px;" width="3.2" height="4" viewBox="0 0 3.2 4"><path d="M0.2,0.2 L3,2 L0.2,3.8 Z" fill="#222"/></svg>
<svg style="left:67.4px;top:190.20000000000002px;" width="9.2" height="9.2" viewBox="0 0 9.2 9.2"><rect x="0.4" y="0.4" width="8.4" height="8.4" fill="#fff" stroke="#c2c2c2" stroke-width="0.8"/></svg>
<span class="t" style="top:189px;line-height:12px;font-size:7.35px;color:#1c1c1c;left:79.7px;">M67</span>
<svg style="left:98.3px;top:193.8px;" width="3.2" height="4" viewBox="0 0 3.2 4"><path d="M0.2,0.2 L3,2 L0.2,3.8 Z" fill="#222"/></svg>
<svg style="left:67.4px;top:201.10000000000005px;" width="9.2" height="9.2" viewBox="0 0 9.2 9.2"><rect x="0.4" y="0.4" width="8.4" height="8.4" fill="#fff" stroke="#c2c2c2" stroke-width="0.8"/></svg>
<span class="t" style="top:200px;line-height:12px;font-size:7.35px;color:#1c1c1c;left:79.7px;">M68</span>
<svg style="left:98.3px;top:204.70000000000005px;" width="3.2" height="4" viewBox="0 0 3.2 4"><path d="M0.2,0.2 L3,2 L0.2,3.8 Z" fill="#222"/></svg>
</div>
<svg style="left:266.5px;top:320.6px;" width="9" height="12" viewBox="0 0 9 12"><path d="M0.9,0.5 L3.2,4.6" stroke="#2a8ee8" stroke-width="1.3" stroke-linecap="round"/><path d="M1.8,4.8 L4.8,3.6 L8.6,9.3 L3.2,11.6 Z" fill="#2a8ee8"/><path d="M4.2,7 L5.2,10.4 M5.6,6.4 L6.8,9.8" stroke="#8cc6f6" stroke-width="0.5"/></svg>
<div style="left:280px;top:321px;width:1px;height:12px;background:#dcdcdc;"></div>
<svg style="left:282px;top:321px;" width="11.4" height="11.4" viewBox="0 0 11.4 11.4"><path d="M5.6,0.4 V10.8 M0.4,5.6 H10.8" stroke="#4aa82a" stroke-width="2.4"/></svg>
<svg style="left:285.5px;top:344.5px;" width="12" height="12" viewBox="0 0 12 12"><path d="M1.2,9.6 L7.6,2 L9.6,3.6 L3.2,11 L0.8,11.6 Z" fill="#e89a2a" stroke="#8a5a1a" stroke-width="0.5"/><path d="M7.6,2 L8.8,0.8 L10.8,2.4 L9.6,3.6 Z" fill="#c86a5a"/><path d="M0.8,11.6 L1.4,9.8 L2.8,11 Z" fill="#333"/><path d="M5.4,8.6 L7.2,10.6 L10.8,5.6" fill="none" stroke="#3fa02a" stroke-width="1.5"/></svg>
<svg style="left:217px;top:396.5px;" width="11" height="11.5" viewBox="0 0 11 11.5"><path d="M5.4,0.6 L10.2,5.8 H7.4 V10.8 H3.4 V5.8 H0.6 Z" fill="#4aa82a"/></svg>
<div style="left:231px;top:396.5px;width:1px;height:12px;background:#dcdcdc;"></div>
<svg style="left:233px;top:396.5px;" width="11" height="11.5" viewBox="0 0 11 11.5"><path d="M5.4,10.9 L10.2,5.7 H7.4 V0.7 H3.4 V5.7 H0.6 Z" fill="#4aa82a"/></svg>
<div style="left:247px;top:396.5px;width:1px;height:12px;background:#dcdcdc;"></div>
<svg style="left:250.4px;top:397.5px;" width="9.4" height="9.4" viewBox="0 0 9.4 9.4"><path d="M1.2,1.2 L8.2,8.2 M8.2,1.2 L1.2,8.2" stroke="#d8202a" stroke-width="2.2"/></svg>
<div style="left:264px;top:396.5px;width:1px;height:12px;background:#dcdcdc;"></div>
<svg style="left:266.8px;top:396.6px;" width="9" height="12" viewBox="0 0 9 12"><path d="M0.9,0.5 L3.2,4.6" stroke="#2a8ee8" stroke-width="1.3" stroke-linecap="round"/><path d="M1.8,4.8 L4.8,3.6 L8.6,9.3 L3.2,11.6 Z" fill="#2a8ee8"/><path d="M4.2,7 L5.2,10.4 M5.6,6.4 L6.8,9.8" stroke="#8cc6f6" stroke-width="0.5"/></svg>
<div style="left:280px;top:396.5px;width:1px;height:12px;background:#dcdcdc;"></div>
<svg style="left:282.2px;top:396.6px;" width="11" height="11.4" viewBox="0 0 11 11.4"><path d="M0.6,0.6 L10.2,5.6 L0.6,10.8 Z" fill="#4aa82a"/></svg>
<div style="left:3px;top:422px;width:299px;height:207px;background:#ffffff;border:1px solid #c9ced6;"></div>
<div style="left:3px;top:422px;width:299px;height:17px;background:#c7e0fa;"></div>
<span class="t" style="top:425px;line-height:12px;font-size:7.3px;color:#222;left:7px;">Modeling</span>
<svg style="left:274px;top:428px;" width="7" height="5" viewBox="0 0 7 5"><path d="M0.3,0.5 L6.3,0.5 L3.3,4.5 Z" fill="#333"/></svg>
<svg style="left:288px;top:425px;" width="8" height="10" viewBox="0 0 8 10"><path d="M2.2,1 H5.8 M2.8,1 V5 M5.2,1 V5 M1,5.2 H7 M4,5.2 V9.2" stroke="#333" stroke-width="1" fill="none"/></svg>
<svg style="left:4px;top:439px;overflow:hidden;" width="297" height="189" viewBox="0 0 297 189"><clipPath id="gclip"><path d="M-50.4,101.5 L169.2,193.9 L323.9,128.1 L104.3,35.7 Z"/></clipPath><g clip-path="url(#gclip)"><path d="M-124.2,98.4 L92.1,6.4" stroke="#e2e2e2" stroke-width="0.5"/><path d="M-117.3,101.3 L98.9,9.3" stroke="#e2e2e2" stroke-width="0.5"/><path d="M-110.5,104.2 L105.7,12.2" stroke="#e2e2e2" stroke-width="0.5"/><path d="M-103.7,107.0 L112.6,15.1" stroke="#f3b6b0" stroke-width="0.5"/><path d="M-96.8,109.9 L119.4,17.9" stroke="#e2e2e2" stroke-width="0.5"/><path d="M-90.0,112.8 L126.2,20.8" stroke="#e2e2e2" stroke-width="0.5"/><path d="M-83.2,115.7 L133.1,23.7" stroke="#e2e2e2" stroke-width="0.5"/><path d="M-76.3,118.5 L139.9,26.6" stroke="#e2e2e2" stroke-width="0.5"/><path d="M-69.5,121.4 L146.7,29.4" stroke="#f3b6b0" stroke-width="0.5"/><path d="M-62.7,124.3 L153.6,32.3" stroke="#e2e2e2" stroke-width="0.5"/><path d="M-55.8,127.2 L160.4,35.2" stroke="#e2e2e2" stroke-width="0.5"/><path d="M-49.0,130.0 L167.2,38.1" stroke="#e2e2e2" stroke-width="0.5"/><path d="M-42.2,132.9 L174.1,40.9" stroke="#e2e2e2" stroke-width="0.5"/><path d="M-35.3,135.8 L180.9,43.8" stroke="#f3b6b0" stroke-width="0.5"/><path d="M-28.5,138.7 L187.7,46.7" stroke="#e2e2e2" stroke-width="0.5"/><path d="M-21.7,141.5 L194.6,49.6" stroke="#e2e2e2" stroke-width="0.5"/><path d="M-14.8,144.4 L201.4,52.4" stroke="#e2e2e2" stroke-width="0.5"/><path d="M-8.0,147.3 L208.2,55.3" stroke="#e2e2e2" stroke-width="0.5"/><path d="M-1.2,150.2 L215.1,58.2" stroke="#f3b6b0" stroke-width="0.5"/><path d="M5.7,153.0 L221.9,61.1" stroke="#e2e2e2" stroke-width="0.5"/><path d="M12.5,155.9 L228.7,63.9" stroke="#e2e2e2" stroke-width="0.5"/><path d="M19.3,158.8 L235.6,66.8" stroke="#e2e2e2" stroke-width="0.5"/><path d="M26.2,161.7 L242.4,69.7" stroke="#e2e2e2" stroke-width="0.5"/><path d="M33.0,164.5 L249.2,72.6" stroke="#f3b6b0" stroke-width="0.5"/><path d="M39.8,167.4 L256.1,75.4" stroke="#e2e2e2" stroke-width="0.5"/><path d="M46.7,170.3 L262.9,78.3" stroke="#e2e2e2" stroke-width="0.5"/><path d="M53.5,173.2 L269.7,81.2" stroke="#e2e2e2" stroke-width="0.5"/><path d="M60.3,176.0 L276.6,84.1" stroke="#e2e2e2" stroke-width="0.5"/><path d="M67.2,178.9 L283.4,86.9" stroke="#f3b6b0" stroke-width="0.5"/><path d="M74.0,181.8 L290.2,89.8" stroke="#e2e2e2" stroke-width="0.5"/><path d="M80.8,184.7 L297.1,92.7" stroke="#e2e2e2" stroke-width="0.5"/><path d="M87.7,187.5 L303.9,95.6" stroke="#e2e2e2" stroke-width="0.5"/><path d="M94.5,190.4 L310.7,98.4" stroke="#e2e2e2" stroke-width="0.5"/><path d="M101.3,193.3 L317.6,101.3" stroke="#f3b6b0" stroke-width="0.5"/><path d="M108.2,196.2 L324.4,104.2" stroke="#e2e2e2" stroke-width="0.5"/><path d="M115.0,199.0 L331.2,107.1" stroke="#e2e2e2" stroke-width="0.5"/><path d="M121.8,201.9 L338.1,109.9" stroke="#e2e2e2" stroke-width="0.5"/><path d="M128.7,204.8 L344.9,112.8" stroke="#e2e2e2" stroke-width="0.5"/><path d="M135.5,207.7 L351.7,115.7" stroke="#f3b6b0" stroke-width="0.5"/><path d="M142.3,210.5 L358.6,118.6" stroke="#e2e2e2" stroke-width="0.5"/><path d="M149.2,213.4 L365.4,121.4" stroke="#e2e2e2" stroke-width="0.5"/><path d="M156.0,216.3 L372.2,124.3" stroke="#e2e2e2" stroke-width="0.5"/><path d="M162.8,219.2 L379.1,127.2" stroke="#e2e2e2" stroke-width="0.5"/><path d="M169.7,222.0 L385.9,130.1" stroke="#f3b6b0" stroke-width="0.5"/><path d="M176.5,224.9 L392.7,132.9" stroke="#e2e2e2" stroke-width="0.5"/><path d="M183.3,227.8 L399.6,135.8" stroke="#e2e2e2" stroke-width="0.5"/><path d="M190.2,230.7 L406.4,138.7" stroke="#e2e2e2" stroke-width="0.5"/><path d="M197.0,233.5 L413.2,141.6" stroke="#e2e2e2" stroke-width="0.5"/><path d="M-155.5,116.4 L156.1,247.5" stroke="#e2e2e2" stroke-width="0.5"/><path d="M-148.8,113.5 L162.8,244.6" stroke="#e2e2e2" stroke-width="0.5"/><path d="M-142.1,110.7 L169.5,241.8" stroke="#e2e2e2" stroke-width="0.5"/><path d="M-135.4,107.8 L176.2,238.9" stroke="#e2e2e2" stroke-width="0.5"/><path d="M-128.7,105.0 L182.9,236.1" stroke="#f3b6b0" stroke-width="0.5"/><path d="M-122.0,102.1 L189.6,233.2" stroke="#e2e2e2" stroke-width="0.5"/><path d="M-115.4,99.3 L196.2,230.4" stroke="#e2e2e2" stroke-width="0.5"/><path d="M-108.7,96.4 L202.9,227.5" stroke="#e2e2e2" stroke-width="0.5"/><path d="M-102.0,93.6 L209.6,224.7" stroke="#e2e2e2" stroke-width="0.5"/><path d="M-95.3,90.7 L216.3,221.8" stroke="#f3b6b0" stroke-width="0.5"/><path d="M-88.6,87.9 L223.0,219.0" stroke="#e2e2e2" stroke-width="0.5"/><path d="M-81.9,85.0 L229.7,216.1" stroke="#e2e2e2" stroke-width="0.5"/><path d="M-75.2,82.2 L236.4,213.3" stroke="#e2e2e2" stroke-width="0.5"/><path d="M-68.5,79.3 L243.1,210.4" stroke="#e2e2e2" stroke-width="0.5"/><path d="M-61.8,76.5 L249.8,207.6" stroke="#f3b6b0" stroke-width="0.5"/><path d="M-55.1,73.7 L256.5,204.8" stroke="#e2e2e2" stroke-width="0.5"/><path d="M-48.4,70.8 L263.2,201.9" stroke="#e2e2e2" stroke-width="0.5"/><path d="M-41.7,68.0 L269.9,199.1" stroke="#e2e2e2" stroke-width="0.5"/><path d="M-35.0,65.1 L276.6,196.2" stroke="#e2e2e2" stroke-width="0.5"/><path d="M-28.3,62.3 L283.3,193.4" stroke="#f3b6b0" stroke-width="0.5"/><path d="M-21.6,59.4 L290.0,190.5" stroke="#e2e2e2" stroke-width="0.5"/><path d="M-14.9,56.6 L296.7,187.7" stroke="#e2e2e2" stroke-width="0.5"/><path d="M-8.2,53.7 L303.4,184.8" stroke="#e2e2e2" stroke-width="0.5"/><path d="M-1.6,50.9 L310.0,182.0" stroke="#e2e2e2" stroke-width="0.5"/><path d="M5.1,48.0 L316.7,179.1" stroke="#f3b6b0" stroke-width="0.5"/><path d="M11.8,45.2 L323.4,176.3" stroke="#e2e2e2" stroke-width="0.5"/><path d="M18.5,42.3 L330.1,173.4" stroke="#e2e2e2" stroke-width="0.5"/><path d="M25.2,39.5 L336.8,170.6" stroke="#e2e2e2" stroke-width="0.5"/><path d="M31.9,36.6 L343.5,167.7" stroke="#e2e2e2" stroke-width="0.5"/><path d="M38.6,33.8 L350.2,164.9" stroke="#f3b6b0" stroke-width="0.5"/><path d="M45.3,30.9 L356.9,162.0" stroke="#e2e2e2" stroke-width="0.5"/><path d="M52.0,28.1 L363.6,159.2" stroke="#e2e2e2" stroke-width="0.5"/><path d="M58.7,25.3 L370.3,156.4" stroke="#e2e2e2" stroke-width="0.5"/><path d="M65.4,22.4 L377.0,153.5" stroke="#e2e2e2" stroke-width="0.5"/><path d="M72.1,19.6 L383.7,150.7" stroke="#f3b6b0" stroke-width="0.5"/><path d="M78.8,16.7 L390.4,147.8" stroke="#e2e2e2" stroke-width="0.5"/><path d="M85.5,13.9 L397.1,145.0" stroke="#e2e2e2" stroke-width="0.5"/><path d="M92.2,11.0 L403.8,142.1" stroke="#e2e2e2" stroke-width="0.5"/><path d="M98.9,8.2 L410.5,139.3" stroke="#e2e2e2" stroke-width="0.5"/><path d="M105.6,5.3 L417.2,136.4" stroke="#f3b6b0" stroke-width="0.5"/><path d="M112.2,2.5 L423.8,133.6" stroke="#e2e2e2" stroke-width="0.5"/><path d="M118.9,-0.4 L430.5,130.7" stroke="#e2e2e2" stroke-width="0.5"/><path d="M125.6,-3.2 L437.2,127.9" stroke="#e2e2e2" stroke-width="0.5"/><path d="M132.3,-6.1 L443.9,125.0" stroke="#e2e2e2" stroke-width="0.5"/><path d="M139.0,-8.9 L450.6,122.2" stroke="#f3b6b0" stroke-width="0.5"/><path d="M145.7,-11.8 L457.3,119.3" stroke="#e2e2e2" stroke-width="0.5"/><path d="M152.4,-14.6 L464.0,116.5" stroke="#e2e2e2" stroke-width="0.5"/><path d="M159.1,-17.5 L470.7,113.6" stroke="#e2e2e2" stroke-width="0.5"/><path d="M165.8,-20.3 L477.4,110.8" stroke="#e2e2e2" stroke-width="0.5"/><path d="M172.5,-23.1 L484.1,108.0" stroke="#f3b6b0" stroke-width="0.5"/><path d="M179.2,-26.0 L490.8,105.1" stroke="#e2e2e2" stroke-width="0.5"/><path d="M185.9,-28.8 L497.5,102.3" stroke="#e2e2e2" stroke-width="0.5"/><path d="M192.6,-31.7 L504.2,99.4" stroke="#e2e2e2" stroke-width="0.5"/><path d="M199.3,-34.5 L510.9,96.6" stroke="#e2e2e2" stroke-width="0.5"/></g><path d="M9.2,112.0 L169.0,178.5 L294.7,124.5 L134.9,58.0 Z" fill="#e673e6" /><path d="M14.5,114.2 L140.2,60.2" stroke="#ee9aee" stroke-width="0.4"/><path d="M19.9,116.4 L145.6,62.4" stroke="#ee9aee" stroke-width="0.4"/><path d="M25.2,118.7 L150.9,64.7" stroke="#ee9aee" stroke-width="0.4"/><path d="M30.5,120.9 L156.2,66.9" stroke="#ee9aee" stroke-width="0.4"/><path d="M35.8,123.1 L161.5,69.1" stroke="#f08a9a" stroke-width="0.4"/><path d="M41.2,125.3 L166.9,71.3" stroke="#ee9aee" stroke-width="0.4"/><path d="M46.5,127.5 L172.2,73.5" stroke="#ee9aee" stroke-width="0.4"/><path d="M51.8,129.7 L177.5,75.7" stroke="#ee9aee" stroke-width="0.4"/><path d="M57.1,131.9 L182.8,78.0" stroke="#ee9aee" stroke-width="0.4"/><path d="M62.5,134.2 L188.2,80.2" stroke="#f08a9a" stroke-width="0.4"/><path d="M67.8,136.4 L193.5,82.4" stroke="#ee9aee" stroke-width="0.4"/><path d="M73.1,138.6 L198.8,84.6" stroke="#ee9aee" stroke-width="0.4"/><path d="M78.4,140.8 L204.1,86.8" stroke="#ee9aee" stroke-width="0.4"/><path d="M83.8,143.0 L209.5,89.0" stroke="#ee9aee" stroke-width="0.4"/><path d="M89.1,145.2 L214.8,91.2" stroke="#f08a9a" stroke-width="0.4"/><path d="M94.4,147.5 L220.1,93.5" stroke="#ee9aee" stroke-width="0.4"/><path d="M99.8,149.7 L225.5,95.7" stroke="#ee9aee" stroke-width="0.4"/><path d="M105.1,151.9 L230.8,97.9" stroke="#ee9aee" stroke-width="0.4"/><path d="M110.4,154.1 L236.1,100.1" stroke="#ee9aee" stroke-width="0.4"/><path d="M115.7,156.3 L241.4,102.3" stroke="#f08a9a" stroke-width="0.4"/><path d="M121.1,158.6 L246.8,104.5" stroke="#ee9aee" stroke-width="0.4"/><path d="M126.4,160.8 L252.1,106.8" stroke="#ee9aee" stroke-width="0.4"/><path d="M131.7,163.0 L257.4,109.0" stroke="#ee9aee" stroke-width="0.4"/><path d="M137.0,165.2 L262.7,111.2" stroke="#ee9aee" stroke-width="0.4"/><path d="M142.4,167.4 L268.1,113.4" stroke="#f08a9a" stroke-width="0.4"/><path d="M147.7,169.6 L273.4,115.6" stroke="#ee9aee" stroke-width="0.4"/><path d="M153.0,171.8 L278.7,117.8" stroke="#ee9aee" stroke-width="0.4"/><path d="M158.3,174.1 L284.0,120.1" stroke="#ee9aee" stroke-width="0.4"/><path d="M163.7,176.3 L289.4,122.3" stroke="#ee9aee" stroke-width="0.4"/><path d="M14.9,109.5 L174.7,176.0" stroke="#ee9aee" stroke-width="0.4"/><path d="M20.6,107.1 L180.4,173.6" stroke="#ee9aee" stroke-width="0.4"/><path d="M26.3,104.6 L186.1,171.1" stroke="#ee9aee" stroke-width="0.4"/><path d="M32.1,102.2 L191.9,168.7" stroke="#ee9aee" stroke-width="0.4"/><path d="M37.8,99.7 L197.6,166.2" stroke="#f08a9a" stroke-width="0.4"/><path d="M43.5,97.3 L203.3,163.8" stroke="#ee9aee" stroke-width="0.4"/><path d="M49.2,94.8 L209.0,161.3" stroke="#ee9aee" stroke-width="0.4"/><path d="M54.9,92.4 L214.7,158.9" stroke="#ee9aee" stroke-width="0.4"/><path d="M60.6,89.9 L220.4,156.4" stroke="#ee9aee" stroke-width="0.4"/><path d="M66.3,87.5 L226.1,154.0" stroke="#f08a9a" stroke-width="0.4"/><path d="M72.0,85.0 L231.8,151.5" stroke="#ee9aee" stroke-width="0.4"/><path d="M77.8,82.5 L237.6,149.0" stroke="#ee9aee" stroke-width="0.4"/><path d="M83.5,80.1 L243.3,146.6" stroke="#ee9aee" stroke-width="0.4"/><path d="M89.2,77.6 L249.0,144.1" stroke="#ee9aee" stroke-width="0.4"/><path d="M94.9,75.2 L254.7,141.7" stroke="#f08a9a" stroke-width="0.4"/><path d="M100.6,72.7 L260.4,139.2" stroke="#ee9aee" stroke-width="0.4"/><path d="M106.3,70.3 L266.1,136.8" stroke="#ee9aee" stroke-width="0.4"/><path d="M112.0,67.8 L271.8,134.3" stroke="#ee9aee" stroke-width="0.4"/><path d="M117.8,65.4 L277.6,131.9" stroke="#ee9aee" stroke-width="0.4"/><path d="M123.5,62.9 L283.3,129.4" stroke="#f08a9a" stroke-width="0.4"/><path d="M129.2,60.5 L289.0,127.0" stroke="#ee9aee" stroke-width="0.4"/><path d="M9.2,112.0 L169.0,178.5 L169.0,181.9 L9.2,114.6 Z" fill="#ee86ee" /><path d="M169.0,178.5 L294.7,124.5 L294.7,127.5 L169.0,181.9 Z" fill="#d860d8" /><path d="M169.0,178.5 L294.7,124.5" stroke="#3a2448" stroke-width="1.6" stroke-linecap="butt" fill="none"/><path d="M9.2,114.8 L169.0,182.1" stroke="#f0b080" stroke-width="0.6" stroke-linecap="butt" fill="none"/><path d="M169.0,182.1 L294.7,127.7" stroke="#f0b080" stroke-width="0.6" stroke-linecap="butt" fill="none"/><path d="M134.8,47.5 L203.9,75.9" stroke="#8e8e8e" stroke-width="3.5" stroke-linecap="butt" fill="none"/><path d="M134.8,44.3 L203.9,72.7" stroke="#c2c2c2" stroke-width="3.5" stroke-linecap="butt" fill="none"/><path d="M203.9,75.9 L281.6,107.8" stroke="#8e8e8e" stroke-width="3.5" stroke-linecap="butt" fill="none"/><path d="M203.9,72.7 L281.6,104.7" stroke="#c2c2c2" stroke-width="3.5" stroke-linecap="butt" fill="none"/><path d="M134.8,64.1 L134.8,16.7" stroke="#474747" stroke-width="6"/><ellipse cx="134.8" cy="64.1" rx="3" ry="1.5" fill="#474747"/><path d="M133.7,64.3 L133.7,16.7" stroke="#858585" stroke-width="3.6"/><path d="M203.9,93.2 L203.9,44.1" stroke="#474747" stroke-width="6"/><ellipse cx="203.9" cy="93.2" rx="3" ry="1.5" fill="#474747"/><path d="M202.8,93.4 L202.8,44.1" stroke="#858585" stroke-width="3.6"/><path d="M281.6,125.9 L281.6,74.9" stroke="#474747" stroke-width="6"/><ellipse cx="281.6" cy="125.9" rx="3" ry="1.5" fill="#474747"/><path d="M280.5,126.1 L280.5,74.9" stroke="#858585" stroke-width="3.6"/><path d="M96.9,63.8 L134.8,47.7" stroke="#333333" stroke-width="3.7" stroke-linecap="butt" fill="none"/><path d="M96.9,60.5 L134.8,44.3" stroke="#bebebe" stroke-width="3.7" stroke-linecap="butt" fill="none"/><path d="M131.3,78.0 L169.3,61.8" stroke="#333333" stroke-width="3.7" stroke-linecap="butt" fill="none"/><path d="M131.3,74.7 L169.3,58.5" stroke="#bebebe" stroke-width="3.7" stroke-linecap="butt" fill="none"/><path d="M165.9,92.2 L203.9,76.1" stroke="#333333" stroke-width="3.7" stroke-linecap="butt" fill="none"/><path d="M165.9,88.9 L203.9,72.7" stroke="#bebebe" stroke-width="3.7" stroke-linecap="butt" fill="none"/><path d="M204.8,108.2 L242.7,92.0" stroke="#333333" stroke-width="3.7" stroke-linecap="butt" fill="none"/><path d="M204.8,104.9 L242.7,88.7" stroke="#bebebe" stroke-width="3.7" stroke-linecap="butt" fill="none"/><path d="M243.7,124.2 L281.6,108.0" stroke="#333333" stroke-width="3.7" stroke-linecap="butt" fill="none"/><path d="M243.7,120.9 L281.6,104.7" stroke="#bebebe" stroke-width="3.7" stroke-linecap="butt" fill="none"/><path d="M96.9,63.7 L165.9,92.1" stroke="#8e8e8e" stroke-width="3.5" stroke-linecap="butt" fill="none"/><path d="M96.9,60.5 L165.9,88.9" stroke="#c2c2c2" stroke-width="3.5" stroke-linecap="butt" fill="none"/><path d="M165.9,92.1 L243.7,124.0" stroke="#8e8e8e" stroke-width="3.5" stroke-linecap="butt" fill="none"/><path d="M165.9,88.9 L243.7,120.9" stroke="#c2c2c2" stroke-width="3.5" stroke-linecap="butt" fill="none"/><path d="M96.9,80.3 L96.9,33.0" stroke="#474747" stroke-width="6"/><ellipse cx="96.9" cy="80.3" rx="3" ry="1.5" fill="#474747"/><path d="M95.8,80.5 L95.8,33.0" stroke="#858585" stroke-width="3.6"/><path d="M165.9,109.3 L165.9,60.4" stroke="#474747" stroke-width="6"/><ellipse cx="165.9" cy="109.3" rx="3" ry="1.5" fill="#474747"/><path d="M164.8,109.5 L164.8,60.4" stroke="#858585" stroke-width="3.6"/><path d="M243.7,142.0 L243.7,91.2" stroke="#474747" stroke-width="6"/><ellipse cx="243.7" cy="142.0" rx="3" ry="1.5" fill="#474747"/><path d="M242.6,142.2 L242.6,91.2" stroke="#858585" stroke-width="3.6"/><path d="M59.0,80.0 L96.9,63.8" stroke="#333333" stroke-width="3.7" stroke-linecap="butt" fill="none"/><path d="M59.0,76.7 L96.9,60.5" stroke="#bebebe" stroke-width="3.7" stroke-linecap="butt" fill="none"/><path d="M93.4,94.2 L131.3,78.0" stroke="#333333" stroke-width="3.7" stroke-linecap="butt" fill="none"/><path d="M93.4,90.9 L131.3,74.7" stroke="#bebebe" stroke-width="3.7" stroke-linecap="butt" fill="none"/><path d="M128.0,108.4 L165.9,92.2" stroke="#333333" stroke-width="3.7" stroke-linecap="butt" fill="none"/><path d="M128.0,105.1 L165.9,88.9" stroke="#bebebe" stroke-width="3.7" stroke-linecap="butt" fill="none"/><path d="M166.9,124.4 L204.8,108.2" stroke="#333333" stroke-width="3.7" stroke-linecap="butt" fill="none"/><path d="M166.9,121.1 L204.8,104.9" stroke="#bebebe" stroke-width="3.7" stroke-linecap="butt" fill="none"/><path d="M205.7,140.4 L243.7,124.2" stroke="#333333" stroke-width="3.7" stroke-linecap="butt" fill="none"/><path d="M205.7,137.1 L243.7,120.9" stroke="#bebebe" stroke-width="3.7" stroke-linecap="butt" fill="none"/><path d="M59.0,79.9 L128.0,108.2" stroke="#8e8e8e" stroke-width="3.5" stroke-linecap="butt" fill="none"/><path d="M59.0,76.7 L128.0,105.1" stroke="#c2c2c2" stroke-width="3.5" stroke-linecap="butt" fill="none"/><path d="M128.0,108.2 L205.7,140.2" stroke="#8e8e8e" stroke-width="3.5" stroke-linecap="butt" fill="none"/><path d="M128.0,105.1 L205.7,137.1" stroke="#c2c2c2" stroke-width="3.5" stroke-linecap="butt" fill="none"/><path d="M59.0,96.4 L59.0,49.3" stroke="#474747" stroke-width="6"/><ellipse cx="59.0" cy="96.4" rx="3" ry="1.5" fill="#474747"/><path d="M57.9,96.6 L57.9,49.3" stroke="#858585" stroke-width="3.6"/><path d="M128.0,125.5 L128.0,76.6" stroke="#474747" stroke-width="6"/><ellipse cx="128.0" cy="125.5" rx="3" ry="1.5" fill="#474747"/><path d="M126.9,125.7 L126.9,76.6" stroke="#858585" stroke-width="3.6"/><path d="M205.7,158.2 L205.7,107.4" stroke="#474747" stroke-width="6"/><ellipse cx="205.7" cy="158.2" rx="3" ry="1.5" fill="#474747"/><path d="M204.6,158.4 L204.6,107.4" stroke="#858585" stroke-width="3.6"/><path d="M21.0,96.2 L59.0,80.0" stroke="#333333" stroke-width="3.7" stroke-linecap="butt" fill="none"/><path d="M21.0,92.9 L59.0,76.7" stroke="#bebebe" stroke-width="3.7" stroke-linecap="butt" fill="none"/><path d="M55.5,110.4 L93.4,94.2" stroke="#333333" stroke-width="3.7" stroke-linecap="butt" fill="none"/><path d="M55.5,107.1 L93.4,90.9" stroke="#bebebe" stroke-width="3.7" stroke-linecap="butt" fill="none"/><path d="M90.1,124.6 L128.0,108.4" stroke="#333333" stroke-width="3.7" stroke-linecap="butt" fill="none"/><path d="M90.1,121.3 L128.0,105.1" stroke="#bebebe" stroke-width="3.7" stroke-linecap="butt" fill="none"/><path d="M128.9,140.6 L166.9,124.4" stroke="#333333" stroke-width="3.7" stroke-linecap="butt" fill="none"/><path d="M128.9,137.3 L166.9,121.1" stroke="#bebebe" stroke-width="3.7" stroke-linecap="butt" fill="none"/><path d="M167.8,156.6 L205.7,140.4" stroke="#333333" stroke-width="3.7" stroke-linecap="butt" fill="none"/><path d="M167.8,153.2 L205.7,137.1" stroke="#bebebe" stroke-width="3.7" stroke-linecap="butt" fill="none"/><path d="M21.0,96.0 L90.1,124.4" stroke="#8e8e8e" stroke-width="3.5" stroke-linecap="butt" fill="none"/><path d="M21.0,92.9 L90.1,121.3" stroke="#c2c2c2" stroke-width="3.5" stroke-linecap="butt" fill="none"/><path d="M90.1,124.4 L167.8,156.4" stroke="#8e8e8e" stroke-width="3.5" stroke-linecap="butt" fill="none"/><path d="M90.1,121.3 L167.8,153.2" stroke="#c2c2c2" stroke-width="3.5" stroke-linecap="butt" fill="none"/><path d="M21.0,112.5 L21.0,65.5" stroke="#474747" stroke-width="6"/><ellipse cx="21.0" cy="112.5" rx="3" ry="1.5" fill="#474747"/><path d="M19.9,112.7 L19.9,65.5" stroke="#858585" stroke-width="3.6"/><path d="M90.1,141.6 L90.1,92.9" stroke="#474747" stroke-width="6"/><ellipse cx="90.1" cy="141.6" rx="3" ry="1.5" fill="#474747"/><path d="M89.0,141.8 L89.0,92.9" stroke="#858585" stroke-width="3.6"/><path d="M167.8,174.3 L167.8,123.7" stroke="#474747" stroke-width="6"/><ellipse cx="167.8" cy="174.3" rx="3" ry="1.5" fill="#474747"/><path d="M166.7,174.5 L166.7,123.7" stroke="#858585" stroke-width="3.6"/><path d="M3.8,58.9 L167.8,123.9" stroke="#8a8a8a" stroke-width="2.9" stroke-linecap="round" fill="none"/><path d="M3.8,57.2 L167.8,122.2" stroke="#bcbcbc" stroke-width="2.9" stroke-linecap="round" fill="none"/><path d="M41.7,42.6 L205.7,107.6" stroke="#8a8a8a" stroke-width="2.9" stroke-linecap="round" fill="none"/><path d="M41.7,40.9 L205.7,105.9" stroke="#bcbcbc" stroke-width="2.9" stroke-linecap="round" fill="none"/><path d="M79.7,26.4 L243.7,91.4" stroke="#8a8a8a" stroke-width="2.9" stroke-linecap="round" fill="none"/><path d="M79.7,24.7 L243.7,89.7" stroke="#bcbcbc" stroke-width="2.9" stroke-linecap="round" fill="none"/><path d="M117.6,10.1 L281.6,75.1" stroke="#8a8a8a" stroke-width="2.9" stroke-linecap="round" fill="none"/><path d="M117.6,8.4 L281.6,73.4" stroke="#bcbcbc" stroke-width="2.9" stroke-linecap="round" fill="none"/><path d="M3.8,58.9 L117.6,10.1" stroke="#3e3e3e" stroke-width="2.9" stroke-linecap="round" fill="none"/><path d="M3.8,57.2 L117.6,8.4" stroke="#bcbcbc" stroke-width="2.9" stroke-linecap="round" fill="none"/><path d="M21.0,65.7 L134.8,16.9" stroke="#3e3e3e" stroke-width="2.9" stroke-linecap="round" fill="none"/><path d="M21.0,64.0 L134.8,15.2" stroke="#bcbcbc" stroke-width="2.9" stroke-linecap="round" fill="none"/><path d="M55.5,79.4 L169.3,30.6" stroke="#3e3e3e" stroke-width="2.9" stroke-linecap="round" fill="none"/><path d="M55.5,77.7 L169.3,28.9" stroke="#bcbcbc" stroke-width="2.9" stroke-linecap="round" fill="none"/><path d="M90.1,93.1 L203.9,44.3" stroke="#3e3e3e" stroke-width="2.9" stroke-linecap="round" fill="none"/><path d="M90.1,91.4 L203.9,42.6" stroke="#bcbcbc" stroke-width="2.9" stroke-linecap="round" fill="none"/><path d="M167.8,123.9 L281.6,75.1" stroke="#3e3e3e" stroke-width="2.9" stroke-linecap="round" fill="none"/><path d="M167.8,122.2 L281.6,73.4" stroke="#bcbcbc" stroke-width="2.9" stroke-linecap="round" fill="none"/><path d="M3.8,57.2 L167.8,122.2" stroke="#bcbcbc" stroke-width="2.9" stroke-linecap="round" fill="none"/><path d="M41.7,40.9 L205.7,105.9" stroke="#bcbcbc" stroke-width="2.9" stroke-linecap="round" fill="none"/><path d="M79.7,24.7 L243.7,89.7" stroke="#bcbcbc" stroke-width="2.9" stroke-linecap="round" fill="none"/><path d="M117.6,8.4 L281.6,73.4" stroke="#bcbcbc" stroke-width="2.9" stroke-linecap="round" fill="none"/><path d="M42.9,55.6 L113.0,83.3" stroke="#8f0000" stroke-width="3.0" stroke-linecap="butt" fill="none"/><path d="M80.9,39.4 L150.9,67.1" stroke="#8f0000" stroke-width="3.0" stroke-linecap="butt" fill="none"/><path d="M118.8,23.1 L188.8,50.8" stroke="#8f0000" stroke-width="3.0" stroke-linecap="butt" fill="none"/><path d="M37.9,67.7 L148.3,20.3" stroke="#8f0000" stroke-width="2.3" stroke-linecap="butt" fill="none"/><path d="M51.2,72.9 L161.5,25.6" stroke="#8f0000" stroke-width="2.3" stroke-linecap="butt" fill="none"/><path d="M64.4,78.2 L174.8,30.8" stroke="#8f0000" stroke-width="2.3" stroke-linecap="butt" fill="none"/><path d="M77.7,83.4 L188.1,36.1" stroke="#8f0000" stroke-width="2.3" stroke-linecap="butt" fill="none"/><path d="M91.0,88.7 L201.4,41.4" stroke="#8f0000" stroke-width="2.3" stroke-linecap="butt" fill="none"/><path d="M90.1,88.9 L203.9,40.1 L242.7,34.8 L128.9,83.8 Z" fill="#8f0000" /><path d="M128.9,83.8 L167.8,120.7" stroke="#8f0000" stroke-width="3.8" stroke-linecap="round" fill="none"/><path d="M166.9,67.5 L205.7,104.4" stroke="#8f0000" stroke-width="3.8" stroke-linecap="round" fill="none"/><path d="M204.8,51.2 L243.7,88.1" stroke="#8f0000" stroke-width="3.8" stroke-linecap="round" fill="none"/><path d="M242.7,34.8 L281.6,71.9" stroke="#8f0000" stroke-width="3.8" stroke-linecap="round" fill="none"/><path d="M136.7,91.2 L250.5,42.2" stroke="#8f0000" stroke-width="2.3" stroke-linecap="butt" fill="none"/><path d="M144.5,98.6 L258.3,49.6" stroke="#8f0000" stroke-width="2.3" stroke-linecap="butt" fill="none"/><path d="M152.3,105.9 L266.1,57.0" stroke="#8f0000" stroke-width="2.3" stroke-linecap="butt" fill="none"/><path d="M160.0,113.3 L273.8,64.5" stroke="#8f0000" stroke-width="2.3" stroke-linecap="butt" fill="none"/><path d="M167.8,120.7 L281.6,71.9" stroke="#8f0000" stroke-width="2.2" stroke-linecap="butt" fill="none"/><path d="M128.9,83.8 L242.7,34.8" stroke="#8f0000" stroke-width="3" stroke-linecap="butt" fill="none"/><path d="M128.9,83.8 L205.7,104.4" stroke="#8f0000" stroke-width="1.8" stroke-linecap="butt" fill="none"/><path d="M166.9,67.5 L167.8,120.7" stroke="#8f0000" stroke-width="1.8" stroke-linecap="butt" fill="none"/><path d="M204.8,51.2 L281.6,71.9" stroke="#8f0000" stroke-width="1.8" stroke-linecap="butt" fill="none"/><path d="M242.7,34.8 L243.7,88.1" stroke="#8f0000" stroke-width="1.8" stroke-linecap="butt" fill="none"/><path d="M90.1,90.4 L167.8,121.2" stroke="#8f0000" stroke-width="1.6" stroke-linecap="butt" fill="none"/></svg>
<svg style="left:0px;top:0px;pointer-events:none;" width="304" height="470" viewBox="0 0 304 470"><path d="M143.2,450 L148.5,444.6 L153.8,450 M144.8,449 V455 H147.2 V451.4 H149.8 V455 H152.2 V449" fill="none" stroke="#2a2a2a" stroke-width="1.1" stroke-linejoin="round"/><circle cx="165.6" cy="450" r="4.6" fill="none" stroke="#2a2a2a" stroke-width="1"/><path d="M162.6,448.6 H168.6 L165.6,452.6 Z" fill="#2a2a2a"/><rect x="178" y="445" width="6" height="5.4" fill="none" stroke="#555" stroke-width="0.8"/><circle cx="183.2" cy="450.6" r="2.8" fill="#fff" stroke="#2a2a2a" stroke-width="1"/><path d="M185.2,452.8 L187.8,455.4" stroke="#2a2a2a" stroke-width="1.3"/><circle cx="198.4" cy="448.8" r="3.4" fill="none" stroke="#2a2a2a" stroke-width="1.2"/><path d="M200.8,451.4 L204,454.8" stroke="#2a2a2a" stroke-width="1.5"/><path d="M216.5,444.8 V455.2 M211.3,450 H221.7" stroke="#2a2a2a" stroke-width="1.1"/><path d="M214.9,446.4 L216.5,444.4 L218.1,446.4 Z M214.9,453.6 L216.5,455.6 L218.1,453.6 Z M212.9,448.4 L210.9,450 L212.9,451.6 Z M220.1,448.4 L222.1,450 L220.1,451.6 Z" fill="#2a2a2a"/><path d="M230,447.6 A4.3,4.3 0 1 1 229.6,452" fill="none" stroke="#2a2a2a" stroke-width="1.1"/><path d="M228.4,445.2 L230.2,448.6 L233,446.4 Z" fill="#2a2a2a"/><path d="M246.4,447.6 V445.6 H248.6 M252.8,445.6 H255 V447.6 M255,452.4 V454.4 H252.8 M248.6,454.4 H246.4 V452.4 M246.6,445.8 L248.8,448 M254.8,445.8 L252.6,448 M254.8,454.2 L252.6,452 M246.6,454.2 L248.8,452" stroke="#2a2a2a" stroke-width="1.3" fill="none"/><path d="M262.6,447.4 V452.6" stroke="#555" stroke-width="0.8"/><path d="M270.5,445.5 H279.5 M270.5,448.5 H279.5 M270.5,451.5 H276 M272.5,444 V453.5 M275.5,444 V453.5 M278.5,444 V450" stroke="#9a9a9a" stroke-width="0.7" stroke-dasharray="1.4,1" fill="none"/><path d="M277.2,451 L277.2,455.6 L278.4,454.6 L279.2,456.2 L280,455.8 L279.2,454.2 L280.6,454 Z" fill="#fff" stroke="#8a8a8a" stroke-width="0.5"/><path d="M286.5,444.5 H296 V454.5 H286.5 Z M286.5,447.8 H296 M286.5,451.2 H296 M289.7,444.5 V454.5 M292.9,444.5 V454.5" stroke="#2a2a2a" stroke-width="0.9" fill="none"/><path d="M294.2,451.4 V455.8 L295.3,454.9 L296,456.4 L296.8,456 L296.1,454.6 L297.4,454.4 Z" fill="#fff" stroke="#555" stroke-width="0.5"/></svg>
<svg style="left:0px;top:0px;" width="304" height="630" viewBox="0 0 304 630"><path d="M23.3,607.6 V596.6" stroke="#f47a12" stroke-width="1.4"/><path d="M21.6,597.6 L23.3,593.6 L25,597.6 Z" fill="#f47a12"/><path d="M23.3,608.4 L32.6,604.8" stroke="#2a2a2a" stroke-width="1.6"/><path d="M31,603.2 L35,604 L32.2,606.8 Z" fill="#2a2a2a"/><path d="M23.3,608.4 L31.6,611.4" stroke="#8a8a8a" stroke-width="1.6"/><path d="M30.4,609.6 L34.6,612.4 L30,613.2 Z" fill="#8a8a8a"/><circle cx="23.3" cy="608.4" r="1.9" fill="#6c6c6c"/></svg>
<span class="t" style="top:583px;line-height:12px;font-size:7.6px;color:#222;left:-123.3px;width:300px;text-align:center;">Y</span>
<span class="t" style="top:593px;line-height:12px;font-size:7.6px;color:#222;left:-111.4px;width:300px;text-align:center;">X</span>
<span class="t" style="top:602px;line-height:12px;font-size:7.6px;color:#222;left:-111.6px;width:300px;text-align:center;">Z</span>
<svg style="left:0px;top:0px;" width="304" height="630" viewBox="0 0 304 630"><ellipse cx="274.7" cy="609" rx="17.2" ry="8.4" fill="none" stroke="#bcbcbc" stroke-width="3"/><path d="M261.5,593.6 L274.7,589.4 L287.9,593.6 L274.7,597.8 Z" fill="#f4f4f4" stroke="#333" stroke-width="0.7" stroke-linejoin="round"/><path d="M261.5,593.6 L274.7,597.8 L274.7,616 L263.5,608.4 Z" fill="#dadada" stroke="#333" stroke-width="0.7" stroke-linejoin="round"/><path d="M274.7,597.8 L287.9,593.6 L285.9,608.4 L274.7,616 Z" fill="#ececec" stroke="#333" stroke-width="0.7" stroke-linejoin="round"/><path d="M273,593.4 L276.4,593.8 M266.8,603.6 L270.4,604.6 M278,605.6 L284,603" stroke="#555" stroke-width="0.9"/></svg>
<div style="left:3px;top:630px;width:47px;height:18px;background:#ffffff;border:1px solid #cdcdcd;"></div>
<span class="t" style="top:634px;line-height:12px;font-size:7.3px;color:#222;left:-123.5px;width:300px;text-align:center;">Commands</span>
<div style="left:52px;top:630px;width:33px;height:18px;background:#ffffff;border:1px solid #cdcdcd;"></div>
<span class="t" style="top:634px;line-height:12px;font-size:7.3px;color:#222;left:-81.5px;width:300px;text-align:center;">Output</span>
<div style="left:87px;top:630px;width:40px;height:18px;background:#ffffff;border:1px solid #cdcdcd;"></div>
<span class="t" style="top:634px;line-height:12px;font-size:7.3px;color:#222;left:-43.0px;width:300px;text-align:center;">Error Log</span>
<div style="left:2px;top:649px;width:975px;height:1px;background:#cfcfcf;"></div>
<div style="left:0px;top:650px;width:979px;height:3px;background:#000;"></div>
<div style="left:0px;top:0px;width:2px;height:653px;background:#000;"></div>
<div style="left:977px;top:0px;width:2px;height:653px;background:#000;"></div>
<div style="left:305px;top:70px;width:35px;height:18px;background:#c7e0fa;"></div>
<span class="t" style="top:73px;line-height:12px;font-size:7.3px;color:#1e2e45;left:310px;">Reports</span>
<div style="left:305px;top:87px;width:671px;height:1px;background:#cfcfcf;"></div>
<div style="left:305px;top:87px;width:1px;height:542px;background:#d4d4d4;"></div>
<div style="left:305px;top:628px;width:671px;height:1px;background:#d4d4d4;"></div>
<svg style="left:969px;top:74.5px;" width="8" height="8" viewBox="0 0 8 8"><path d="M1,1 L7,7 M7,1 L1,7" stroke="#222" stroke-width="1.2"/></svg>
<div style="left:308px;top:90px;width:668px;height:536px;background:#ffffff;border:1px solid #cdcdcd;border-radius:2px;"></div>
<div style="left:310px;top:110px;width:663px;height:514px;background:#ffffff;border:1px solid #8eaad6;border-top:none;"></div>
<div style="left:311px;top:93px;width:13px;height:17px;background:#2b579a;"></div>
<div style="left:310px;top:110px;width:663px;height:1px;background:#8eaad6;"></div>
<svg style="left:963.5px;top:96.5px;" width="8" height="8" viewBox="0 0 8 8"><path d="M1,1 L7,7 M7,1 L1,7" stroke="#222" stroke-width="1.2"/></svg>
<div style="left:314px;top:113px;width:22.5px;height:490px;background:#f6f6f6;"></div>
<span class="t" style="left:324px;top:142.5px;font-size:9.8px;color:#4a4a4a;line-height:12px;transform:translate(-50%,-50%) rotate(90deg);">Navigation</span>
<svg style="left:336px;top:112px;" width="622" height="480" viewBox="0 0 622 480"><path d="M0.5,16.5 H621" stroke="#9c9c9c" stroke-width="1" stroke-dasharray="3.2,3.2" fill="none"/><path d="M25.5,6 V478" stroke="#d6d6d6" stroke-width="1" stroke-dasharray="3.2,3.2" fill="none"/><path d="M610.5,6 V478" stroke="#d6d6d6" stroke-width="1" stroke-dasharray="3.2,3.2" fill="none"/><path d="M25.5,44.5 H610.5" stroke="#a9a9a9" stroke-width="1.2" fill="none"/></svg>
<span class="t" style="top:136px;line-height:12px;font-size:11px;color:#2a2a2a;left:544.3px;width:400px;text-align:right;letter-spacing:-0.13px;">STAAD Foundation Advanced</span>
<div style="left:376px;top:169px;width:556px;height:100px;background:#fafafa;border:1px solid #b4b4b4;"></div>
<div style="left:377px;top:170px;width:554px;height:19px;background:#e2e2e2;"></div>
<div style="left:377px;top:209px;width:554px;height:20px;background:#f0f0f0;"></div>
<div style="left:377px;top:249px;width:554px;height:19px;background:#f0f0f0;"></div>
<div style="left:377px;top:189px;width:554px;height:1px;background:#d2d2d2;"></div>
<div style="left:561px;top:170px;width:1px;height:98px;background:#b9b9b9;"></div>
<div style="left:746px;top:170px;width:1px;height:98px;background:#b9b9b9;"></div>
<span class="t" style="top:174px;line-height:12px;font-size:9.6px;color:#111;left:379.5px;font-weight:bold;letter-spacing:-0.2px;">Edge Id</span>
<span class="t" style="top:174px;line-height:12px;font-size:9.6px;color:#111;left:564px;font-weight:bold;letter-spacing:0.05px;">Stress At Start Point  (N/mm2)</span>
<span class="t" style="top:174px;line-height:12px;font-size:9.6px;color:#111;left:749px;font-weight:bold;letter-spacing:0.05px;">Stress At End Point  (N/mm2)</span>
<span class="t" style="top:193px;line-height:12px;font-size:9.7px;color:#262626;left:379.3px;letter-spacing:-0.5px;">Edge 1</span>
<span class="t" style="top:193px;line-height:12px;font-size:9.7px;color:#262626;left:564px;">-1.464</span>
<span class="t" style="top:193px;line-height:12px;font-size:9.7px;color:#262626;left:749px;">-1.251</span>
<span class="t" style="top:213px;line-height:12px;font-size:9.7px;color:#262626;left:379.3px;letter-spacing:-0.5px;">Edge 2</span>
<span class="t" style="top:213px;line-height:12px;font-size:9.7px;color:#262626;left:564px;">-1.251</span>
<span class="t" style="top:213px;line-height:12px;font-size:9.7px;color:#262626;left:749px;">-1.451</span>
<span class="t" style="top:233px;line-height:12px;font-size:9.7px;color:#262626;left:379.3px;letter-spacing:-0.5px;">Edge 3</span>
<span class="t" style="top:233px;line-height:12px;font-size:9.7px;color:#262626;left:564px;">-1.451</span>
<span class="t" style="top:233px;line-height:12px;font-size:9.7px;color:#262626;left:749px;">-1.664</span>
<span class="t" style="top:253px;line-height:12px;font-size:9.7px;color:#262626;left:379.3px;letter-spacing:-0.5px;">Edge 4</span>
<span class="t" style="top:253px;line-height:12px;font-size:9.7px;color:#262626;left:564px;">-1.664</span>
<span class="t" style="top:253px;line-height:12px;font-size:9.7px;color:#262626;left:749px;">-1.464</span>
<span class="t" style="top:284px;line-height:12px;font-size:9.7px;color:#262626;left:379.2px;letter-spacing:-0.45px;">Vug</span>
<span class="t" style="top:284px;line-height:12px;font-size:9.7px;color:#262626;left:512.5px;">=</span>
<span class="t" style="top:284px;line-height:12px;font-size:9.7px;color:#262626;left:543px;">1.457 N/mm2</span>
<span class="t" style="top:303px;line-height:12px;font-size:9.7px;color:#262626;left:379.2px;letter-spacing:-0.45px;">Vu</span>
<span class="t" style="top:303px;line-height:12px;font-size:9.7px;color:#262626;left:512.5px;">=</span>
<span class="t" style="top:303px;line-height:12px;font-size:9.7px;color:#262626;left:543px;">1.664 N/mm2</span>
<span class="t" style="top:334px;line-height:12px;font-size:9.6px;color:#8a1520;left:376.5px;font-weight:bold;">Allowable Shear Stress</span>
<span class="t" style="top:363px;line-height:12px;font-size:9.7px;color:#262626;left:379.2px;letter-spacing:-0.45px;">ΦVc1</span>
<span class="t" style="top:363px;line-height:12px;font-size:9.7px;color:#262626;left:512.5px;">=</span>
<span class="t" style="top:363px;line-height:12px;font-size:9.7px;color:#262626;left:543px;">(0.332 * λ * √f&#x27;c) * Φ</span>
<span class="t" style="top:363px;line-height:12px;font-size:9.7px;color:#262626;left:528.8px;width:400px;text-align:right;letter-spacing:-0.3px;">Cl.22.6.5.2 (a)</span>
<span class="t" style="top:383px;line-height:12px;font-size:9.7px;color:#262626;left:512.5px;">=</span>
<span class="t" style="top:383px;line-height:12px;font-size:9.7px;color:#262626;left:543px;">(0.332 * 1 * √ 35) * 0.75</span>
<span class="t" style="top:402px;line-height:12px;font-size:9.7px;color:#262626;left:512.5px;">=</span>
<span class="t" style="top:402px;line-height:12px;font-size:9.7px;color:#262626;left:543px;">1.473 N/mm2</span>
<span class="t" style="top:422px;line-height:12px;font-size:9.7px;color:#262626;left:379.2px;letter-spacing:-0.45px;">ΦVc2</span>
<span class="t" style="top:422px;line-height:12px;font-size:9.7px;color:#262626;left:512.5px;">=</span>
<span class="t" style="top:422px;line-height:12px;font-size:9.7px;color:#262626;left:543px;">(0.166 * (1 + 2 / β) * λ * √f&#x27;c) * Φ</span>
<span class="t" style="top:422px;line-height:12px;font-size:9.7px;color:#262626;left:528.8px;width:400px;text-align:right;letter-spacing:-0.3px;">Cl.22.6.5.2 (b)</span>
<span class="t" style="top:441px;line-height:12px;font-size:9.7px;color:#262626;left:512.5px;">=</span>
<span class="t" style="top:441px;line-height:12px;font-size:9.7px;color:#262626;left:543px;">(0.166 * ((1 + 2/ 2) * 1 * √35) * 0.75</span>
<span class="t" style="top:461px;line-height:12px;font-size:9.7px;color:#262626;left:512.5px;">=</span>
<span class="t" style="top:461px;line-height:12px;font-size:9.7px;color:#262626;left:543px;">1.473 N/mm2</span>
<span class="t" style="top:480px;line-height:12px;font-size:9.7px;color:#262626;left:379.2px;letter-spacing:-0.45px;">ΦVc3</span>
<span class="t" style="top:480px;line-height:12px;font-size:9.7px;color:#262626;left:512.5px;">=</span>
<span class="t" style="top:480px;line-height:12px;font-size:9.7px;color:#262626;left:543px;">(0.083 * (2 + (αs * d/bo))* λ * √f&#x27;c) * Φ</span>
<span class="t" style="top:480px;line-height:12px;font-size:9.7px;color:#262626;left:528.8px;width:400px;text-align:right;letter-spacing:-0.3px;">Cl.22.6.5.2 (c)</span>
<span class="t" style="top:500px;line-height:12px;font-size:9.7px;color:#262626;left:512.5px;">=</span>
<span class="t" style="top:500px;line-height:12px;font-size:9.7px;color:#262626;left:543px;">(0.083 * (2 + (40 * 192.7/2570.8))* 1 * √35) * 0.75</span>
<span class="t" style="top:520px;line-height:12px;font-size:9.7px;color:#262626;left:512.5px;">=</span>
<span class="t" style="top:520px;line-height:12px;font-size:9.7px;color:#262626;left:543px;">1.841 N/mm2</span>
<span class="t" style="top:539px;line-height:12px;font-size:9.7px;color:#262626;left:379.2px;letter-spacing:-0.45px;">ΦVc</span>
<span class="t" style="top:539px;line-height:12px;font-size:9.7px;color:#262626;left:512.5px;">=</span>
<span class="t" style="top:539px;line-height:12px;font-size:9.7px;color:#262626;left:543px;letter-spacing:-0.25px;">min. (ΦVc1, ΦVc2, ΦVc3)</span>
<span class="t" style="top:539px;line-height:12px;font-size:9.7px;color:#262626;left:528.8px;width:400px;text-align:right;letter-spacing:-0.3px;">Cl.22.6.5.2</span>
<span class="t" style="top:559px;line-height:12px;font-size:9.7px;color:#262626;left:512.5px;">=</span>
<span class="t" style="top:559px;line-height:12px;font-size:9.7px;color:#262626;left:543px;letter-spacing:-0.16px;">min. (1.473, 1.473, 1.841)</span>
<div style="left:500px;top:576px;width:70px;height:15px;overflow:hidden">
<span class="t" style="top:2px;line-height:12px;font-size:9.7px;color:#262626;left:12.5px;">=</span>
<span class="t" style="top:2px;line-height:12px;font-size:9.7px;color:#262626;left:43px;">1.473 N/mm2</span>
</div>
<div style="left:957.5px;top:112px;width:10.5px;height:479px;background:#f0f0f0;"></div>
<div style="left:957.5px;top:115px;width:10.5px;height:10.5px;background:#ffffff;border:1px solid #c4c4c4;"></div>
<svg style="left:960.5px;top:118.5px;" width="5" height="4" viewBox="0 0 5 4"><path d="M0.3,3.3 L2.5,0.5 L4.7,3.3 Z" fill="#333"/></svg>
<div style="left:957.5px;top:513px;width:10.5px;height:21.5px;background:#ffffff;border:1px solid #c4c4c4;"></div>
<div style="left:336.5px;top:591px;width:631.5px;height:11px;background:#f0f0f0;"></div>
<div style="left:336.5px;top:591px;width:10.5px;height:10.5px;background:#ffffff;border:1px solid #c4c4c4;"></div>
<svg style="left:339.8px;top:594px;" width="4" height="5" viewBox="0 0 4 5"><path d="M3.4,0.3 L0.6,2.5 L3.4,4.7 Z" fill="#333"/></svg>
<div style="left:362.5px;top:591.5px;width:578px;height:10px;background:#ffffff;border:1px solid #bdbdbd;"></div>
<div style="left:946px;top:591px;width:11px;height:10.5px;background:#ffffff;border:1px solid #c4c4c4;"></div>
<svg style="left:949.8px;top:594px;" width="4" height="5" viewBox="0 0 4 5"><path d="M0.6,0.3 L3.4,2.5 L0.6,4.7 Z" fill="#1d3a66"/></svg>
<div style="left:957.5px;top:591px;width:10.5px;height:10.5px;background:#ffffff;border:1px solid #c4c4c4;"></div>
<svg style="left:960.3px;top:594.5px;" width="5" height="4" viewBox="0 0 5 4"><path d="M0.3,0.5 L4.7,0.5 L2.5,3.5 Z" fill="#1d3a66"/></svg>
<div style="left:314px;top:603px;width:656px;height:18px;background:#f0f0f0;"></div>
<div style="left:314px;top:603px;width:656px;height:1px;background:#dadada;"></div>
<span class="t" style="top:607px;line-height:12px;font-size:7.35px;color:#444;left:319px;">Page:</span>
<div style="left:338px;top:606px;width:20.5px;height:11.5px;background:#ffffff;border:1px solid #bdbdbd;"></div>
<span class="t" style="top:607px;line-height:12px;font-size:7.35px;color:#333;left:198.3px;width:300px;text-align:center;">11</span>
<span class="t" style="top:607px;line-height:12px;font-size:7.35px;color:#444;left:361px;">/ 12</span>
<span class="t" style="top:607px;line-height:12px;font-size:7px;color:#444;left:824px;">120%</span>
<svg style="left:846px;top:607px;" width="8" height="8" viewBox="0 0 8 8"><path d="M1.4,3.9 H6" stroke="#222" stroke-width="1.4"/></svg>
<div style="left:856px;top:610.5px;width:79px;height:1px;background:#8f8f8f;"></div>
<div style="left:858px;top:614.5px;width:1px;height:1.5px;background:#aaa;"></div>
<div style="left:932.5px;top:614.5px;width:1px;height:1.5px;background:#aaa;"></div>
<div style="left:895px;top:606.5px;width:2.8px;height:8.5px;background:#333;"></div>
<svg style="left:937px;top:607px;" width="8" height="8" viewBox="0 0 8 8"><path d="M1,3.9 H6.4 M3.7,1.2 V6.6" stroke="#222" stroke-width="1.4"/></svg>
<svg style="left:961px;top:613px;" width="7" height="7" viewBox="0 0 7 7"><path d="M6.5,1 L1,6.5 M6.5,3.5 L3.5,6.5 M6.5,5.5 L5.5,6.5" stroke="#b5b5b5" stroke-width="0.8"/></svg>
<svg style="left:563px;top:574px;" width="188" height="18.3" viewBox="0 0 188 18.3"><rect x="0.5" y="0" width="187" height="18.3" fill="#f3f3f3"/><rect x="77.4" y="0" width="18" height="18.3" fill="#bddcf9"/><rect x="170" y="0" width="17.5" height="18.3" fill="#bddcf9"/><path d="M5,4.2 V14.8" stroke="#17365f" stroke-width="1.3"/><path d="M16,5 L6.5,9.6 L16,14.2 Z" fill="#2f8fe6" stroke="#17365f" stroke-width="0.8" stroke-linejoin="round"/><path d="M33.5,5 L24.5,9.6 L33.5,14.2 Z" fill="#2f8fe6" stroke="#17365f" stroke-width="0.8" stroke-linejoin="round"/><path d="M43,5 L52.5,9.6 L43,14.2 Z" fill="#2f8fe6" stroke="#17365f" stroke-width="0.8" stroke-linejoin="round"/><path d="M61.5,5 L70.5,9.6 L61.5,14.2 Z" fill="#2f8fe6" stroke="#17365f" stroke-width="0.8" stroke-linejoin="round"/><path d="M72.5,4.2 V14.8" stroke="#17365f" stroke-width="1.3"/><circle cx="86.4" cy="9.4" r="6.3" fill="#f4faff" stroke="#2f8fe6" stroke-width="1.6"/><path d="M90,5.6 L87.6,10.6 L85.2,8.2 Z" fill="#f08a1c"/><path d="M82.8,13.2 L85.2,8.2 L87.6,10.6 Z" fill="#2f8fe6"/><path d="M106.3,10.8 L111.7,15.6" stroke="#f0952a" stroke-width="2.1" stroke-linecap="round"/><circle cx="103.5" cy="8" r="4.3" fill="#dff0fd" stroke="#2f8fe6" stroke-width="1.4"/><path d="M101.2,8 H105.8" stroke="#2f8fe6" stroke-width="1.3"/><path d="M124.6,10.8 L130.0,15.6" stroke="#f0952a" stroke-width="2.1" stroke-linecap="round"/><circle cx="121.8" cy="8" r="4.3" fill="#dff0fd" stroke="#2f8fe6" stroke-width="1.4"/><path d="M142.8,10.8 L148.2,15.6" stroke="#f0952a" stroke-width="2.1" stroke-linecap="round"/><circle cx="140" cy="8" r="4.3" fill="#dff0fd" stroke="#2f8fe6" stroke-width="1.4"/><path d="M137.7,8 H142.3" stroke="#2f8fe6" stroke-width="1.3"/><path d="M140,5.7 V10.3" stroke="#2f8fe6" stroke-width="1.3"/><path d="M153.5,2.5 H162 L165.8,6.3 V16.5 H153.5 Z" fill="#fff" stroke="#3a3a3a" stroke-width="0.9"/><path d="M162,2.5 V6.3 H165.8" fill="none" stroke="#3a3a3a" stroke-width="0.8"/><path d="M155.5,8.5 H164 M155.5,10.7 H164 M155.5,12.9 H164 M155.5,15 H164" stroke="#5aa5ea" stroke-width="0.8"/><path d="M172.5,0.8 V5.8 H185 V0.8" fill="#fff" stroke="#3a3a3a" stroke-width="0.9"/><path d="M174,3.6 H183.5" stroke="#5aa5ea" stroke-width="0.8"/><path d="M172.5,17.8 V10 H181.5 L185,13 V17.8" fill="#fff" stroke="#3a3a3a" stroke-width="0.9"/><path d="M181.5,10 V13 H185" fill="none" stroke="#3a3a3a" stroke-width="0.8"/><path d="M174,14.2 H183.5 M174,16.3 H183.5" stroke="#5aa5ea" stroke-width="0.8"/></svg>
<svg style="left:278.5px;top:85.8px;" width="10" height="15" viewBox="0 0 10 15"><path d="M0.8,0.8 V11.6 L3.4,9.2 L5.2,13.4 L6.9,12.7 L5.1,8.6 L8.6,8.6 Z" fill="#fff" stroke="#222" stroke-width="0.8" stroke-linejoin="round"/></svg>
</div></body></html>
